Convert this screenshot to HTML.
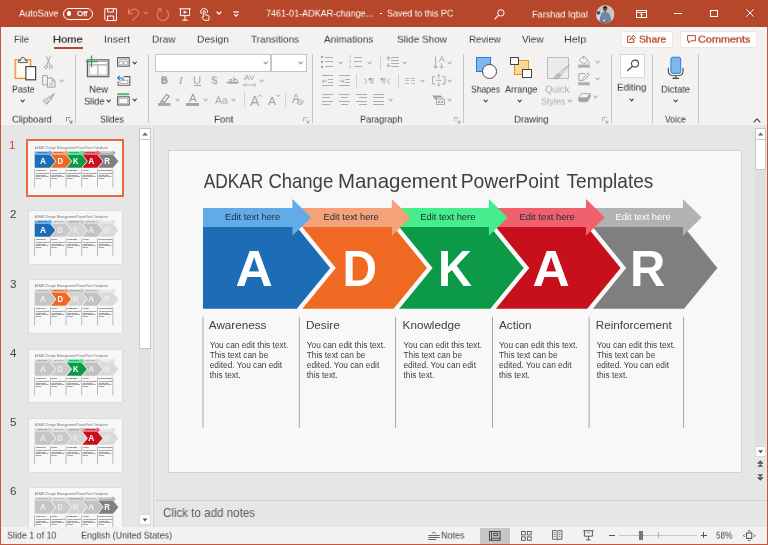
<!DOCTYPE html>
<html lang="en"><head><meta charset="utf-8"><title>PowerPoint</title>
<style>
html,body{margin:0;padding:0;}
body{width:768px;height:545px;overflow:hidden;position:relative;background:#E6E6E6;font-family:"Liberation Sans",sans-serif;}
.r{position:absolute;display:block;}
.t{position:absolute;white-space:nowrap;transform-origin:0 50%;will-change:transform;}
svg{overflow:visible;will-change:transform;}
svg text{font-family:"Liberation Sans",sans-serif;}
</style></head><body>
<div class="r" style="left:0px;top:0px;width:768px;height:545px;background:#E6E6E6;"></div>
<div class="r" style="left:0px;top:0px;width:768px;height:26.6px;background:#B7472A;"></div>
<div class="r" style="left:0px;top:26.6px;width:768px;height:98.4px;background:#F3F2F1;"></div>
<div class="r" style="left:168px;top:150px;width:574px;height:323px;background:#F8F8F8;box-shadow:0 0 0 1px #D2D2D2 inset;"></div>
<svg class="r" style="left:168px;top:150px;" width="574" height="323" viewBox="0 0 574 323"><text y="38.1" font-size="20.4" fill="#404040"><tspan x="35.7" textLength="59.7" lengthAdjust="spacingAndGlyphs">ADKAR</tspan> <tspan x="100.4" textLength="64.8" lengthAdjust="spacingAndGlyphs">Change</tspan> <tspan x="169.9" textLength="119.3" lengthAdjust="spacingAndGlyphs">Management</tspan> <tspan x="292.7" textLength="98.6" lengthAdjust="spacingAndGlyphs">PowerPoint</tspan> <tspan x="398.5" textLength="86.9" lengthAdjust="spacingAndGlyphs">Templates</tspan></text><polygon points="35.0,77.0 128.8,77.0 162.2,117.9 128.8,158.8 35.0,158.8" fill="#1C6DB6"/><polygon points="134.4,77.0 225.6,77.0 259.0,117.9 225.6,158.8 134.4,158.8 167.8,117.9" fill="#F06922"/><polygon points="231.2,77.0 322.3,77.0 355.7,117.9 322.3,158.8 231.2,158.8 264.6,117.9" fill="#0C9A48"/><polygon points="327.9,77.0 419.2,77.0 452.6,117.9 419.2,158.8 327.9,158.8 361.3,117.9" fill="#C8101D"/><polygon points="424.8,77.0 516.0,77.0 549.4,117.9 516.0,158.8 424.8,158.8 458.2,117.9" fill="#7F7F7F"/><polygon points="418.0,58.0 514.9,58.0 514.9,49.0 533.7,67.4 514.9,85.8 514.9,77.0 418.0,77.0" fill="#B2B2B2"/><polygon points="320.9,58.0 418.0,58.0 418.0,49.0 436.8,67.4 418.0,85.8 418.0,77.0 320.9,77.0" fill="#F0606D"/><polygon points="223.9,58.0 320.9,58.0 320.9,49.0 339.7,67.4 320.9,85.8 320.9,77.0 223.9,77.0" fill="#45EE8A"/><polygon points="124.4,58.0 223.9,58.0 223.9,49.0 242.7,67.4 223.9,85.8 223.9,77.0 124.4,77.0" fill="#F5A17A"/><polygon points="35.0,58.0 124.4,58.0 124.4,49.0 143.2,67.4 124.4,85.8 124.4,77.0 35.0,77.0" fill="#62ABE9"/><text transform="translate(67.41,135.5) scale(1.031,1)" font-size="50" font-weight="bold" fill="#fff">A</text><text transform="translate(174.50,135.5) scale(0.956,1)" font-size="50" font-weight="bold" fill="#fff">D</text><text transform="translate(270.05,135.5) scale(0.940,1)" font-size="50" font-weight="bold" fill="#fff">K</text><text transform="translate(364.41,135.5) scale(1.031,1)" font-size="50" font-weight="bold" fill="#fff">A</text><text transform="translate(462.12,135.5) scale(0.978,1)" font-size="50" font-weight="bold" fill="#fff">R</text><text x="84.6" y="69.9" font-size="9.4" fill="#203040" text-anchor="middle">Edit text here</text><text x="183.2" y="69.9" font-size="9.4" fill="#203040" text-anchor="middle">Edit text here</text><text x="279.8" y="69.9" font-size="9.4" fill="#203040" text-anchor="middle">Edit text here</text><text x="379.2" y="69.9" font-size="9.4" fill="#203040" text-anchor="middle">Edit text here</text><text x="475.0" y="69.9" font-size="9.4" fill="#fff" text-anchor="middle">Edit text here</text><rect x="34.5" y="166.7" width="1" height="111.3" fill="#A8A8A8"/><rect x="130.8" y="166.7" width="1" height="111.3" fill="#A8A8A8"/><rect x="227.1" y="166.7" width="1" height="111.3" fill="#A8A8A8"/><rect x="324.0" y="166.7" width="1" height="111.3" fill="#A8A8A8"/><rect x="420.6" y="166.7" width="1" height="111.3" fill="#A8A8A8"/><rect x="515.1" y="166.7" width="1" height="111.3" fill="#A8A8A8"/><text x="40.8" y="178.6" font-size="11.7" fill="#404040">Awareness</text><text x="41.7" y="198.1" font-size="8.3" fill="#404040">You can edit this text.</text><text x="41.7" y="208.1" font-size="8.3" fill="#404040">This text can be</text><text x="41.7" y="218.2" font-size="8.3" fill="#404040">edited. You can edit</text><text x="41.7" y="228.2" font-size="8.3" fill="#404040">this text.</text><text x="137.9" y="178.6" font-size="11.7" fill="#404040">Desire</text><text x="138.8" y="198.1" font-size="8.3" fill="#404040">You can edit this text.</text><text x="138.8" y="208.1" font-size="8.3" fill="#404040">This text can be</text><text x="138.8" y="218.2" font-size="8.3" fill="#404040">edited. You can edit</text><text x="138.8" y="228.2" font-size="8.3" fill="#404040">this text.</text><text x="234.6" y="178.6" font-size="11.7" fill="#404040">Knowledge</text><text x="235.5" y="198.1" font-size="8.3" fill="#404040">You can edit this text.</text><text x="235.5" y="208.1" font-size="8.3" fill="#404040">This text can be</text><text x="235.5" y="218.2" font-size="8.3" fill="#404040">edited. You can edit</text><text x="235.5" y="228.2" font-size="8.3" fill="#404040">this text.</text><text x="331.0" y="178.6" font-size="11.7" fill="#404040">Action</text><text x="331.0" y="198.1" font-size="8.3" fill="#404040">You can edit this text.</text><text x="331.0" y="208.1" font-size="8.3" fill="#404040">This text can be</text><text x="331.0" y="218.2" font-size="8.3" fill="#404040">edited. You can edit</text><text x="331.0" y="228.2" font-size="8.3" fill="#404040">this text.</text><text x="427.8" y="178.6" font-size="11.7" fill="#404040">Reinforcement</text><text x="428.7" y="198.1" font-size="8.3" fill="#404040">You can edit this text.</text><text x="428.7" y="208.1" font-size="8.3" fill="#404040">This text can be</text><text x="428.7" y="218.2" font-size="8.3" fill="#404040">edited. You can edit</text><text x="428.7" y="228.2" font-size="8.3" fill="#404040">this text.</text></svg>
<div class="r" style="left:25.7px;top:138.9px;width:98.4px;height:58.0px;background:#F8F8F8;box-sizing:border-box;border:2px solid #EA6A3C;"></div>
<svg class="r" style="left:28.5px;top:141.8px;" width="93.4" height="52.56" viewBox="0 0 574 323"><text y="43.1" font-size="20.4" fill="#707070"><tspan x="35.7" textLength="59.7" lengthAdjust="spacingAndGlyphs">ADKAR</tspan> <tspan x="100.4" textLength="64.8" lengthAdjust="spacingAndGlyphs">Change</tspan> <tspan x="169.9" textLength="119.3" lengthAdjust="spacingAndGlyphs">Management</tspan> <tspan x="292.7" textLength="98.6" lengthAdjust="spacingAndGlyphs">PowerPoint</tspan> <tspan x="398.5" textLength="86.9" lengthAdjust="spacingAndGlyphs">Templates</tspan></text><polygon points="35.0,77.0 128.8,77.0 162.2,117.9 128.8,158.8 35.0,158.8" fill="#1C6DB6"/><polygon points="134.4,77.0 225.6,77.0 259.0,117.9 225.6,158.8 134.4,158.8 167.8,117.9" fill="#F06922"/><polygon points="231.2,77.0 322.3,77.0 355.7,117.9 322.3,158.8 231.2,158.8 264.6,117.9" fill="#0C9A48"/><polygon points="327.9,77.0 419.2,77.0 452.6,117.9 419.2,158.8 327.9,158.8 361.3,117.9" fill="#C8101D"/><polygon points="424.8,77.0 516.0,77.0 549.4,117.9 516.0,158.8 424.8,158.8 458.2,117.9" fill="#7F7F7F"/><polygon points="418.0,58.0 514.9,58.0 514.9,49.0 533.7,67.4 514.9,85.8 514.9,77.0 418.0,77.0" fill="#B2B2B2"/><polygon points="320.9,58.0 418.0,58.0 418.0,49.0 436.8,67.4 418.0,85.8 418.0,77.0 320.9,77.0" fill="#F0606D"/><polygon points="223.9,58.0 320.9,58.0 320.9,49.0 339.7,67.4 320.9,85.8 320.9,77.0 223.9,77.0" fill="#45EE8A"/><polygon points="124.4,58.0 223.9,58.0 223.9,49.0 242.7,67.4 223.9,85.8 223.9,77.0 124.4,77.0" fill="#F5A17A"/><polygon points="35.0,58.0 124.4,58.0 124.4,49.0 143.2,67.4 124.4,85.8 124.4,77.0 35.0,77.0" fill="#62ABE9"/><text transform="translate(67.41,135.5) scale(1.031,1)" font-size="50" font-weight="bold" fill="#fff">A</text><text transform="translate(174.50,135.5) scale(0.956,1)" font-size="50" font-weight="bold" fill="#fff">D</text><text transform="translate(270.05,135.5) scale(0.940,1)" font-size="50" font-weight="bold" fill="#fff">K</text><text transform="translate(364.41,135.5) scale(1.031,1)" font-size="50" font-weight="bold" fill="#fff">A</text><text transform="translate(462.12,135.5) scale(0.978,1)" font-size="50" font-weight="bold" fill="#fff">R</text><text x="84.6" y="69.9" font-size="9.4" fill="#203040" text-anchor="middle">Edit text here</text><text x="183.2" y="69.9" font-size="9.4" fill="#203040" text-anchor="middle">Edit text here</text><text x="279.8" y="69.9" font-size="9.4" fill="#203040" text-anchor="middle">Edit text here</text><text x="379.2" y="69.9" font-size="9.4" fill="#203040" text-anchor="middle">Edit text here</text><text x="475.0" y="69.9" font-size="9.4" fill="#fff" text-anchor="middle">Edit text here</text><rect x="32.8" y="166.7" width="4.5" height="111.3" fill="#A2A2A2"/><rect x="129.1" y="166.7" width="4.5" height="111.3" fill="#A2A2A2"/><rect x="225.4" y="166.7" width="4.5" height="111.3" fill="#A2A2A2"/><rect x="322.2" y="166.7" width="4.5" height="111.3" fill="#A2A2A2"/><rect x="418.9" y="166.7" width="4.5" height="111.3" fill="#A2A2A2"/><rect x="513.4" y="166.7" width="4.5" height="111.3" fill="#A2A2A2"/><text x="40.8" y="178.6" font-size="11.7" fill="#404040" font-weight="bold">Awareness</text><text x="41.7" y="198.1" font-size="8.3" fill="#404040" font-weight="bold">You can edit this text.</text><text x="41.7" y="208.1" font-size="8.3" fill="#404040" font-weight="bold">This text can be</text><text x="41.7" y="218.2" font-size="8.3" fill="#404040" font-weight="bold">edited. You can edit</text><text x="41.7" y="228.2" font-size="8.3" fill="#404040" font-weight="bold">this text.</text><text x="137.9" y="178.6" font-size="11.7" fill="#404040" font-weight="bold">Desire</text><text x="138.8" y="198.1" font-size="8.3" fill="#404040" font-weight="bold">You can edit this text.</text><text x="138.8" y="208.1" font-size="8.3" fill="#404040" font-weight="bold">This text can be</text><text x="138.8" y="218.2" font-size="8.3" fill="#404040" font-weight="bold">edited. You can edit</text><text x="138.8" y="228.2" font-size="8.3" fill="#404040" font-weight="bold">this text.</text><text x="234.6" y="178.6" font-size="11.7" fill="#404040" font-weight="bold">Knowledge</text><text x="235.5" y="198.1" font-size="8.3" fill="#404040" font-weight="bold">You can edit this text.</text><text x="235.5" y="208.1" font-size="8.3" fill="#404040" font-weight="bold">This text can be</text><text x="235.5" y="218.2" font-size="8.3" fill="#404040" font-weight="bold">edited. You can edit</text><text x="235.5" y="228.2" font-size="8.3" fill="#404040" font-weight="bold">this text.</text><text x="331.0" y="178.6" font-size="11.7" fill="#404040" font-weight="bold">Action</text><text x="331.0" y="198.1" font-size="8.3" fill="#404040" font-weight="bold">You can edit this text.</text><text x="331.0" y="208.1" font-size="8.3" fill="#404040" font-weight="bold">This text can be</text><text x="331.0" y="218.2" font-size="8.3" fill="#404040" font-weight="bold">edited. You can edit</text><text x="331.0" y="228.2" font-size="8.3" fill="#404040" font-weight="bold">this text.</text><text x="427.8" y="178.6" font-size="11.7" fill="#404040" font-weight="bold">Reinforcement</text><text x="428.7" y="198.1" font-size="8.3" fill="#404040" font-weight="bold">You can edit this text.</text><text x="428.7" y="208.1" font-size="8.3" fill="#404040" font-weight="bold">This text can be</text><text x="428.7" y="218.2" font-size="8.3" fill="#404040" font-weight="bold">edited. You can edit</text><text x="428.7" y="228.2" font-size="8.3" fill="#404040" font-weight="bold">this text.</text></svg>
<span class="t" style="left:9.27px;top:137.90px;font-size:11.6px;line-height:13.33px;color:#D24726;">1</span>
<div class="r" style="left:27.5px;top:210.10000000000002px;width:95.4px;height:54.55783972125435px;background:#F8F8F8;box-sizing:border-box;border:1px solid #DDDDDD;"></div>
<svg class="r" style="left:28.5px;top:211.10000000000002px;" width="93.4" height="52.56" viewBox="0 0 574 323"><text y="43.1" font-size="20.4" fill="#707070"><tspan x="35.7" textLength="59.7" lengthAdjust="spacingAndGlyphs">ADKAR</tspan> <tspan x="100.4" textLength="64.8" lengthAdjust="spacingAndGlyphs">Change</tspan> <tspan x="169.9" textLength="119.3" lengthAdjust="spacingAndGlyphs">Management</tspan> <tspan x="292.7" textLength="98.6" lengthAdjust="spacingAndGlyphs">PowerPoint</tspan> <tspan x="398.5" textLength="86.9" lengthAdjust="spacingAndGlyphs">Templates</tspan></text><polygon points="35.0,77.0 128.8,77.0 162.2,117.9 128.8,158.8 35.0,158.8" fill="#1C6DB6"/><polygon points="134.4,77.0 225.6,77.0 259.0,117.9 225.6,158.8 134.4,158.8 167.8,117.9" fill="#C9C9C9"/><polygon points="231.2,77.0 322.3,77.0 355.7,117.9 322.3,158.8 231.2,158.8 264.6,117.9" fill="#D3D3D3"/><polygon points="327.9,77.0 419.2,77.0 452.6,117.9 419.2,158.8 327.9,158.8 361.3,117.9" fill="#C1C1C1"/><polygon points="424.8,77.0 516.0,77.0 549.4,117.9 516.0,158.8 424.8,158.8 458.2,117.9" fill="#DADADA"/><polygon points="418.0,58.0 514.9,58.0 514.9,49.0 533.7,67.4 514.9,85.8 514.9,77.0 418.0,77.0" fill="#E3E3E3"/><polygon points="320.9,58.0 418.0,58.0 418.0,49.0 436.8,67.4 418.0,85.8 418.0,77.0 320.9,77.0" fill="#D9D9D9"/><polygon points="223.9,58.0 320.9,58.0 320.9,49.0 339.7,67.4 320.9,85.8 320.9,77.0 223.9,77.0" fill="#C9C9C9"/><polygon points="124.4,58.0 223.9,58.0 223.9,49.0 242.7,67.4 223.9,85.8 223.9,77.0 124.4,77.0" fill="#DDDDDD"/><polygon points="35.0,58.0 124.4,58.0 124.4,49.0 143.2,67.4 124.4,85.8 124.4,77.0 35.0,77.0" fill="#62ABE9"/><text transform="translate(67.41,135.5) scale(1.031,1)" font-size="50" font-weight="bold" fill="#fff">A</text><text transform="translate(174.50,135.5) scale(0.956,1)" font-size="50" font-weight="bold" fill="#EDEDED">D</text><text transform="translate(270.05,135.5) scale(0.940,1)" font-size="50" font-weight="bold" fill="#EDEDED">K</text><text transform="translate(364.41,135.5) scale(1.031,1)" font-size="50" font-weight="bold" fill="#EDEDED">A</text><text transform="translate(462.12,135.5) scale(0.978,1)" font-size="50" font-weight="bold" fill="#EDEDED">R</text><text x="84.6" y="69.9" font-size="9.4" fill="#203040" text-anchor="middle">Edit text here</text><text x="183.2" y="69.9" font-size="9.4" fill="#777" text-anchor="middle">Edit text here</text><text x="279.8" y="69.9" font-size="9.4" fill="#777" text-anchor="middle">Edit text here</text><text x="379.2" y="69.9" font-size="9.4" fill="#777" text-anchor="middle">Edit text here</text><text x="475.0" y="69.9" font-size="9.4" fill="#fff" text-anchor="middle">Edit text here</text><rect x="32.8" y="166.7" width="4.5" height="111.3" fill="#A2A2A2"/><rect x="129.1" y="166.7" width="4.5" height="111.3" fill="#A2A2A2"/><rect x="225.4" y="166.7" width="4.5" height="111.3" fill="#A2A2A2"/><rect x="322.2" y="166.7" width="4.5" height="111.3" fill="#A2A2A2"/><rect x="418.9" y="166.7" width="4.5" height="111.3" fill="#A2A2A2"/><rect x="513.4" y="166.7" width="4.5" height="111.3" fill="#A2A2A2"/><text x="40.8" y="178.6" font-size="11.7" fill="#404040" font-weight="bold">Awareness</text><text x="41.7" y="198.1" font-size="8.3" fill="#404040" font-weight="bold">You can edit this text.</text><text x="41.7" y="208.1" font-size="8.3" fill="#404040" font-weight="bold">This text can be</text><text x="41.7" y="218.2" font-size="8.3" fill="#404040" font-weight="bold">edited. You can edit</text><text x="41.7" y="228.2" font-size="8.3" fill="#404040" font-weight="bold">this text.</text><text x="137.9" y="178.6" font-size="11.7" fill="#404040" font-weight="bold">Desire</text><text x="138.8" y="198.1" font-size="8.3" fill="#404040" font-weight="bold">You can edit this text.</text><text x="138.8" y="208.1" font-size="8.3" fill="#404040" font-weight="bold">This text can be</text><text x="138.8" y="218.2" font-size="8.3" fill="#404040" font-weight="bold">edited. You can edit</text><text x="138.8" y="228.2" font-size="8.3" fill="#404040" font-weight="bold">this text.</text><text x="234.6" y="178.6" font-size="11.7" fill="#404040" font-weight="bold">Knowledge</text><text x="235.5" y="198.1" font-size="8.3" fill="#404040" font-weight="bold">You can edit this text.</text><text x="235.5" y="208.1" font-size="8.3" fill="#404040" font-weight="bold">This text can be</text><text x="235.5" y="218.2" font-size="8.3" fill="#404040" font-weight="bold">edited. You can edit</text><text x="235.5" y="228.2" font-size="8.3" fill="#404040" font-weight="bold">this text.</text><text x="331.0" y="178.6" font-size="11.7" fill="#404040" font-weight="bold">Action</text><text x="331.0" y="198.1" font-size="8.3" fill="#404040" font-weight="bold">You can edit this text.</text><text x="331.0" y="208.1" font-size="8.3" fill="#404040" font-weight="bold">This text can be</text><text x="331.0" y="218.2" font-size="8.3" fill="#404040" font-weight="bold">edited. You can edit</text><text x="331.0" y="228.2" font-size="8.3" fill="#404040" font-weight="bold">this text.</text><text x="427.8" y="178.6" font-size="11.7" fill="#404040" font-weight="bold">Reinforcement</text><text x="428.7" y="198.1" font-size="8.3" fill="#404040" font-weight="bold">You can edit this text.</text><text x="428.7" y="208.1" font-size="8.3" fill="#404040" font-weight="bold">This text can be</text><text x="428.7" y="218.2" font-size="8.3" fill="#404040" font-weight="bold">edited. You can edit</text><text x="428.7" y="228.2" font-size="8.3" fill="#404040" font-weight="bold">this text.</text></svg>
<span class="t" style="left:9.62px;top:207.20px;font-size:11.6px;line-height:13.33px;color:#444444;">2</span>
<div class="r" style="left:27.5px;top:279.4px;width:95.4px;height:54.55783972125435px;background:#F8F8F8;box-sizing:border-box;border:1px solid #DDDDDD;"></div>
<svg class="r" style="left:28.5px;top:280.4px;" width="93.4" height="52.56" viewBox="0 0 574 323"><text y="43.1" font-size="20.4" fill="#707070"><tspan x="35.7" textLength="59.7" lengthAdjust="spacingAndGlyphs">ADKAR</tspan> <tspan x="100.4" textLength="64.8" lengthAdjust="spacingAndGlyphs">Change</tspan> <tspan x="169.9" textLength="119.3" lengthAdjust="spacingAndGlyphs">Management</tspan> <tspan x="292.7" textLength="98.6" lengthAdjust="spacingAndGlyphs">PowerPoint</tspan> <tspan x="398.5" textLength="86.9" lengthAdjust="spacingAndGlyphs">Templates</tspan></text><polygon points="35.0,77.0 128.8,77.0 162.2,117.9 128.8,158.8 35.0,158.8" fill="#C5C5C5"/><polygon points="134.4,77.0 225.6,77.0 259.0,117.9 225.6,158.8 134.4,158.8 167.8,117.9" fill="#F06922"/><polygon points="231.2,77.0 322.3,77.0 355.7,117.9 322.3,158.8 231.2,158.8 264.6,117.9" fill="#D3D3D3"/><polygon points="327.9,77.0 419.2,77.0 452.6,117.9 419.2,158.8 327.9,158.8 361.3,117.9" fill="#C1C1C1"/><polygon points="424.8,77.0 516.0,77.0 549.4,117.9 516.0,158.8 424.8,158.8 458.2,117.9" fill="#DADADA"/><polygon points="418.0,58.0 514.9,58.0 514.9,49.0 533.7,67.4 514.9,85.8 514.9,77.0 418.0,77.0" fill="#E3E3E3"/><polygon points="320.9,58.0 418.0,58.0 418.0,49.0 436.8,67.4 418.0,85.8 418.0,77.0 320.9,77.0" fill="#D9D9D9"/><polygon points="223.9,58.0 320.9,58.0 320.9,49.0 339.7,67.4 320.9,85.8 320.9,77.0 223.9,77.0" fill="#C9C9C9"/><polygon points="124.4,58.0 223.9,58.0 223.9,49.0 242.7,67.4 223.9,85.8 223.9,77.0 124.4,77.0" fill="#F5A17A"/><polygon points="35.0,58.0 124.4,58.0 124.4,49.0 143.2,67.4 124.4,85.8 124.4,77.0 35.0,77.0" fill="#D2D2D2"/><text transform="translate(67.41,135.5) scale(1.031,1)" font-size="50" font-weight="bold" fill="#EDEDED">A</text><text transform="translate(174.50,135.5) scale(0.956,1)" font-size="50" font-weight="bold" fill="#fff">D</text><text transform="translate(270.05,135.5) scale(0.940,1)" font-size="50" font-weight="bold" fill="#EDEDED">K</text><text transform="translate(364.41,135.5) scale(1.031,1)" font-size="50" font-weight="bold" fill="#EDEDED">A</text><text transform="translate(462.12,135.5) scale(0.978,1)" font-size="50" font-weight="bold" fill="#EDEDED">R</text><text x="84.6" y="69.9" font-size="9.4" fill="#777" text-anchor="middle">Edit text here</text><text x="183.2" y="69.9" font-size="9.4" fill="#203040" text-anchor="middle">Edit text here</text><text x="279.8" y="69.9" font-size="9.4" fill="#777" text-anchor="middle">Edit text here</text><text x="379.2" y="69.9" font-size="9.4" fill="#777" text-anchor="middle">Edit text here</text><text x="475.0" y="69.9" font-size="9.4" fill="#fff" text-anchor="middle">Edit text here</text><rect x="32.8" y="166.7" width="4.5" height="111.3" fill="#A2A2A2"/><rect x="129.1" y="166.7" width="4.5" height="111.3" fill="#A2A2A2"/><rect x="225.4" y="166.7" width="4.5" height="111.3" fill="#A2A2A2"/><rect x="322.2" y="166.7" width="4.5" height="111.3" fill="#A2A2A2"/><rect x="418.9" y="166.7" width="4.5" height="111.3" fill="#A2A2A2"/><rect x="513.4" y="166.7" width="4.5" height="111.3" fill="#A2A2A2"/><text x="40.8" y="178.6" font-size="11.7" fill="#404040" font-weight="bold">Awareness</text><text x="41.7" y="198.1" font-size="8.3" fill="#404040" font-weight="bold">You can edit this text.</text><text x="41.7" y="208.1" font-size="8.3" fill="#404040" font-weight="bold">This text can be</text><text x="41.7" y="218.2" font-size="8.3" fill="#404040" font-weight="bold">edited. You can edit</text><text x="41.7" y="228.2" font-size="8.3" fill="#404040" font-weight="bold">this text.</text><text x="137.9" y="178.6" font-size="11.7" fill="#404040" font-weight="bold">Desire</text><text x="138.8" y="198.1" font-size="8.3" fill="#404040" font-weight="bold">You can edit this text.</text><text x="138.8" y="208.1" font-size="8.3" fill="#404040" font-weight="bold">This text can be</text><text x="138.8" y="218.2" font-size="8.3" fill="#404040" font-weight="bold">edited. You can edit</text><text x="138.8" y="228.2" font-size="8.3" fill="#404040" font-weight="bold">this text.</text><text x="234.6" y="178.6" font-size="11.7" fill="#404040" font-weight="bold">Knowledge</text><text x="235.5" y="198.1" font-size="8.3" fill="#404040" font-weight="bold">You can edit this text.</text><text x="235.5" y="208.1" font-size="8.3" fill="#404040" font-weight="bold">This text can be</text><text x="235.5" y="218.2" font-size="8.3" fill="#404040" font-weight="bold">edited. You can edit</text><text x="235.5" y="228.2" font-size="8.3" fill="#404040" font-weight="bold">this text.</text><text x="331.0" y="178.6" font-size="11.7" fill="#404040" font-weight="bold">Action</text><text x="331.0" y="198.1" font-size="8.3" fill="#404040" font-weight="bold">You can edit this text.</text><text x="331.0" y="208.1" font-size="8.3" fill="#404040" font-weight="bold">This text can be</text><text x="331.0" y="218.2" font-size="8.3" fill="#404040" font-weight="bold">edited. You can edit</text><text x="331.0" y="228.2" font-size="8.3" fill="#404040" font-weight="bold">this text.</text><text x="427.8" y="178.6" font-size="11.7" fill="#404040" font-weight="bold">Reinforcement</text><text x="428.7" y="198.1" font-size="8.3" fill="#404040" font-weight="bold">You can edit this text.</text><text x="428.7" y="208.1" font-size="8.3" fill="#404040" font-weight="bold">This text can be</text><text x="428.7" y="218.2" font-size="8.3" fill="#404040" font-weight="bold">edited. You can edit</text><text x="428.7" y="228.2" font-size="8.3" fill="#404040" font-weight="bold">this text.</text></svg>
<span class="t" style="left:9.74px;top:276.50px;font-size:11.6px;line-height:13.33px;color:#444444;">3</span>
<div class="r" style="left:27.5px;top:348.7px;width:95.4px;height:54.55783972125435px;background:#F8F8F8;box-sizing:border-box;border:1px solid #DDDDDD;"></div>
<svg class="r" style="left:28.5px;top:349.7px;" width="93.4" height="52.56" viewBox="0 0 574 323"><text y="43.1" font-size="20.4" fill="#707070"><tspan x="35.7" textLength="59.7" lengthAdjust="spacingAndGlyphs">ADKAR</tspan> <tspan x="100.4" textLength="64.8" lengthAdjust="spacingAndGlyphs">Change</tspan> <tspan x="169.9" textLength="119.3" lengthAdjust="spacingAndGlyphs">Management</tspan> <tspan x="292.7" textLength="98.6" lengthAdjust="spacingAndGlyphs">PowerPoint</tspan> <tspan x="398.5" textLength="86.9" lengthAdjust="spacingAndGlyphs">Templates</tspan></text><polygon points="35.0,77.0 128.8,77.0 162.2,117.9 128.8,158.8 35.0,158.8" fill="#C5C5C5"/><polygon points="134.4,77.0 225.6,77.0 259.0,117.9 225.6,158.8 134.4,158.8 167.8,117.9" fill="#C9C9C9"/><polygon points="231.2,77.0 322.3,77.0 355.7,117.9 322.3,158.8 231.2,158.8 264.6,117.9" fill="#0C9A48"/><polygon points="327.9,77.0 419.2,77.0 452.6,117.9 419.2,158.8 327.9,158.8 361.3,117.9" fill="#C1C1C1"/><polygon points="424.8,77.0 516.0,77.0 549.4,117.9 516.0,158.8 424.8,158.8 458.2,117.9" fill="#DADADA"/><polygon points="418.0,58.0 514.9,58.0 514.9,49.0 533.7,67.4 514.9,85.8 514.9,77.0 418.0,77.0" fill="#E3E3E3"/><polygon points="320.9,58.0 418.0,58.0 418.0,49.0 436.8,67.4 418.0,85.8 418.0,77.0 320.9,77.0" fill="#D9D9D9"/><polygon points="223.9,58.0 320.9,58.0 320.9,49.0 339.7,67.4 320.9,85.8 320.9,77.0 223.9,77.0" fill="#45EE8A"/><polygon points="124.4,58.0 223.9,58.0 223.9,49.0 242.7,67.4 223.9,85.8 223.9,77.0 124.4,77.0" fill="#DDDDDD"/><polygon points="35.0,58.0 124.4,58.0 124.4,49.0 143.2,67.4 124.4,85.8 124.4,77.0 35.0,77.0" fill="#D2D2D2"/><text transform="translate(67.41,135.5) scale(1.031,1)" font-size="50" font-weight="bold" fill="#EDEDED">A</text><text transform="translate(174.50,135.5) scale(0.956,1)" font-size="50" font-weight="bold" fill="#EDEDED">D</text><text transform="translate(270.05,135.5) scale(0.940,1)" font-size="50" font-weight="bold" fill="#fff">K</text><text transform="translate(364.41,135.5) scale(1.031,1)" font-size="50" font-weight="bold" fill="#EDEDED">A</text><text transform="translate(462.12,135.5) scale(0.978,1)" font-size="50" font-weight="bold" fill="#EDEDED">R</text><text x="84.6" y="69.9" font-size="9.4" fill="#777" text-anchor="middle">Edit text here</text><text x="183.2" y="69.9" font-size="9.4" fill="#777" text-anchor="middle">Edit text here</text><text x="279.8" y="69.9" font-size="9.4" fill="#203040" text-anchor="middle">Edit text here</text><text x="379.2" y="69.9" font-size="9.4" fill="#777" text-anchor="middle">Edit text here</text><text x="475.0" y="69.9" font-size="9.4" fill="#fff" text-anchor="middle">Edit text here</text><rect x="32.8" y="166.7" width="4.5" height="111.3" fill="#A2A2A2"/><rect x="129.1" y="166.7" width="4.5" height="111.3" fill="#A2A2A2"/><rect x="225.4" y="166.7" width="4.5" height="111.3" fill="#A2A2A2"/><rect x="322.2" y="166.7" width="4.5" height="111.3" fill="#A2A2A2"/><rect x="418.9" y="166.7" width="4.5" height="111.3" fill="#A2A2A2"/><rect x="513.4" y="166.7" width="4.5" height="111.3" fill="#A2A2A2"/><text x="40.8" y="178.6" font-size="11.7" fill="#404040" font-weight="bold">Awareness</text><text x="41.7" y="198.1" font-size="8.3" fill="#404040" font-weight="bold">You can edit this text.</text><text x="41.7" y="208.1" font-size="8.3" fill="#404040" font-weight="bold">This text can be</text><text x="41.7" y="218.2" font-size="8.3" fill="#404040" font-weight="bold">edited. You can edit</text><text x="41.7" y="228.2" font-size="8.3" fill="#404040" font-weight="bold">this text.</text><text x="137.9" y="178.6" font-size="11.7" fill="#404040" font-weight="bold">Desire</text><text x="138.8" y="198.1" font-size="8.3" fill="#404040" font-weight="bold">You can edit this text.</text><text x="138.8" y="208.1" font-size="8.3" fill="#404040" font-weight="bold">This text can be</text><text x="138.8" y="218.2" font-size="8.3" fill="#404040" font-weight="bold">edited. You can edit</text><text x="138.8" y="228.2" font-size="8.3" fill="#404040" font-weight="bold">this text.</text><text x="234.6" y="178.6" font-size="11.7" fill="#404040" font-weight="bold">Knowledge</text><text x="235.5" y="198.1" font-size="8.3" fill="#404040" font-weight="bold">You can edit this text.</text><text x="235.5" y="208.1" font-size="8.3" fill="#404040" font-weight="bold">This text can be</text><text x="235.5" y="218.2" font-size="8.3" fill="#404040" font-weight="bold">edited. You can edit</text><text x="235.5" y="228.2" font-size="8.3" fill="#404040" font-weight="bold">this text.</text><text x="331.0" y="178.6" font-size="11.7" fill="#404040" font-weight="bold">Action</text><text x="331.0" y="198.1" font-size="8.3" fill="#404040" font-weight="bold">You can edit this text.</text><text x="331.0" y="208.1" font-size="8.3" fill="#404040" font-weight="bold">This text can be</text><text x="331.0" y="218.2" font-size="8.3" fill="#404040" font-weight="bold">edited. You can edit</text><text x="331.0" y="228.2" font-size="8.3" fill="#404040" font-weight="bold">this text.</text><text x="427.8" y="178.6" font-size="11.7" fill="#404040" font-weight="bold">Reinforcement</text><text x="428.7" y="198.1" font-size="8.3" fill="#404040" font-weight="bold">You can edit this text.</text><text x="428.7" y="208.1" font-size="8.3" fill="#404040" font-weight="bold">This text can be</text><text x="428.7" y="218.2" font-size="8.3" fill="#404040" font-weight="bold">edited. You can edit</text><text x="428.7" y="228.2" font-size="8.3" fill="#404040" font-weight="bold">this text.</text></svg>
<span class="t" style="left:9.97px;top:345.80px;font-size:11.6px;line-height:13.33px;color:#444444;">4</span>
<div class="r" style="left:27.5px;top:418.0px;width:95.4px;height:54.55783972125435px;background:#F8F8F8;box-sizing:border-box;border:1px solid #DDDDDD;"></div>
<svg class="r" style="left:28.5px;top:419.0px;" width="93.4" height="52.56" viewBox="0 0 574 323"><text y="43.1" font-size="20.4" fill="#707070"><tspan x="35.7" textLength="59.7" lengthAdjust="spacingAndGlyphs">ADKAR</tspan> <tspan x="100.4" textLength="64.8" lengthAdjust="spacingAndGlyphs">Change</tspan> <tspan x="169.9" textLength="119.3" lengthAdjust="spacingAndGlyphs">Management</tspan> <tspan x="292.7" textLength="98.6" lengthAdjust="spacingAndGlyphs">PowerPoint</tspan> <tspan x="398.5" textLength="86.9" lengthAdjust="spacingAndGlyphs">Templates</tspan></text><polygon points="35.0,77.0 128.8,77.0 162.2,117.9 128.8,158.8 35.0,158.8" fill="#C5C5C5"/><polygon points="134.4,77.0 225.6,77.0 259.0,117.9 225.6,158.8 134.4,158.8 167.8,117.9" fill="#C9C9C9"/><polygon points="231.2,77.0 322.3,77.0 355.7,117.9 322.3,158.8 231.2,158.8 264.6,117.9" fill="#D3D3D3"/><polygon points="327.9,77.0 419.2,77.0 452.6,117.9 419.2,158.8 327.9,158.8 361.3,117.9" fill="#C8101D"/><polygon points="424.8,77.0 516.0,77.0 549.4,117.9 516.0,158.8 424.8,158.8 458.2,117.9" fill="#DADADA"/><polygon points="418.0,58.0 514.9,58.0 514.9,49.0 533.7,67.4 514.9,85.8 514.9,77.0 418.0,77.0" fill="#E3E3E3"/><polygon points="320.9,58.0 418.0,58.0 418.0,49.0 436.8,67.4 418.0,85.8 418.0,77.0 320.9,77.0" fill="#F0606D"/><polygon points="223.9,58.0 320.9,58.0 320.9,49.0 339.7,67.4 320.9,85.8 320.9,77.0 223.9,77.0" fill="#C9C9C9"/><polygon points="124.4,58.0 223.9,58.0 223.9,49.0 242.7,67.4 223.9,85.8 223.9,77.0 124.4,77.0" fill="#DDDDDD"/><polygon points="35.0,58.0 124.4,58.0 124.4,49.0 143.2,67.4 124.4,85.8 124.4,77.0 35.0,77.0" fill="#D2D2D2"/><text transform="translate(67.41,135.5) scale(1.031,1)" font-size="50" font-weight="bold" fill="#EDEDED">A</text><text transform="translate(174.50,135.5) scale(0.956,1)" font-size="50" font-weight="bold" fill="#EDEDED">D</text><text transform="translate(270.05,135.5) scale(0.940,1)" font-size="50" font-weight="bold" fill="#EDEDED">K</text><text transform="translate(364.41,135.5) scale(1.031,1)" font-size="50" font-weight="bold" fill="#fff">A</text><text transform="translate(462.12,135.5) scale(0.978,1)" font-size="50" font-weight="bold" fill="#EDEDED">R</text><text x="84.6" y="69.9" font-size="9.4" fill="#777" text-anchor="middle">Edit text here</text><text x="183.2" y="69.9" font-size="9.4" fill="#777" text-anchor="middle">Edit text here</text><text x="279.8" y="69.9" font-size="9.4" fill="#777" text-anchor="middle">Edit text here</text><text x="379.2" y="69.9" font-size="9.4" fill="#203040" text-anchor="middle">Edit text here</text><text x="475.0" y="69.9" font-size="9.4" fill="#fff" text-anchor="middle">Edit text here</text><rect x="32.8" y="166.7" width="4.5" height="111.3" fill="#A2A2A2"/><rect x="129.1" y="166.7" width="4.5" height="111.3" fill="#A2A2A2"/><rect x="225.4" y="166.7" width="4.5" height="111.3" fill="#A2A2A2"/><rect x="322.2" y="166.7" width="4.5" height="111.3" fill="#A2A2A2"/><rect x="418.9" y="166.7" width="4.5" height="111.3" fill="#A2A2A2"/><rect x="513.4" y="166.7" width="4.5" height="111.3" fill="#A2A2A2"/><text x="40.8" y="178.6" font-size="11.7" fill="#404040" font-weight="bold">Awareness</text><text x="41.7" y="198.1" font-size="8.3" fill="#404040" font-weight="bold">You can edit this text.</text><text x="41.7" y="208.1" font-size="8.3" fill="#404040" font-weight="bold">This text can be</text><text x="41.7" y="218.2" font-size="8.3" fill="#404040" font-weight="bold">edited. You can edit</text><text x="41.7" y="228.2" font-size="8.3" fill="#404040" font-weight="bold">this text.</text><text x="137.9" y="178.6" font-size="11.7" fill="#404040" font-weight="bold">Desire</text><text x="138.8" y="198.1" font-size="8.3" fill="#404040" font-weight="bold">You can edit this text.</text><text x="138.8" y="208.1" font-size="8.3" fill="#404040" font-weight="bold">This text can be</text><text x="138.8" y="218.2" font-size="8.3" fill="#404040" font-weight="bold">edited. You can edit</text><text x="138.8" y="228.2" font-size="8.3" fill="#404040" font-weight="bold">this text.</text><text x="234.6" y="178.6" font-size="11.7" fill="#404040" font-weight="bold">Knowledge</text><text x="235.5" y="198.1" font-size="8.3" fill="#404040" font-weight="bold">You can edit this text.</text><text x="235.5" y="208.1" font-size="8.3" fill="#404040" font-weight="bold">This text can be</text><text x="235.5" y="218.2" font-size="8.3" fill="#404040" font-weight="bold">edited. You can edit</text><text x="235.5" y="228.2" font-size="8.3" fill="#404040" font-weight="bold">this text.</text><text x="331.0" y="178.6" font-size="11.7" fill="#404040" font-weight="bold">Action</text><text x="331.0" y="198.1" font-size="8.3" fill="#404040" font-weight="bold">You can edit this text.</text><text x="331.0" y="208.1" font-size="8.3" fill="#404040" font-weight="bold">This text can be</text><text x="331.0" y="218.2" font-size="8.3" fill="#404040" font-weight="bold">edited. You can edit</text><text x="331.0" y="228.2" font-size="8.3" fill="#404040" font-weight="bold">this text.</text><text x="427.8" y="178.6" font-size="11.7" fill="#404040" font-weight="bold">Reinforcement</text><text x="428.7" y="198.1" font-size="8.3" fill="#404040" font-weight="bold">You can edit this text.</text><text x="428.7" y="208.1" font-size="8.3" fill="#404040" font-weight="bold">This text can be</text><text x="428.7" y="218.2" font-size="8.3" fill="#404040" font-weight="bold">edited. You can edit</text><text x="428.7" y="228.2" font-size="8.3" fill="#404040" font-weight="bold">this text.</text></svg>
<span class="t" style="left:9.74px;top:415.10px;font-size:11.6px;line-height:13.33px;color:#444444;">5</span>
<div class="r" style="left:27.5px;top:487.3px;width:95.4px;height:54.55783972125435px;background:#F8F8F8;box-sizing:border-box;border:1px solid #DDDDDD;"></div>
<svg class="r" style="left:28.5px;top:488.3px;" width="93.4" height="52.56" viewBox="0 0 574 323"><text y="43.1" font-size="20.4" fill="#707070"><tspan x="35.7" textLength="59.7" lengthAdjust="spacingAndGlyphs">ADKAR</tspan> <tspan x="100.4" textLength="64.8" lengthAdjust="spacingAndGlyphs">Change</tspan> <tspan x="169.9" textLength="119.3" lengthAdjust="spacingAndGlyphs">Management</tspan> <tspan x="292.7" textLength="98.6" lengthAdjust="spacingAndGlyphs">PowerPoint</tspan> <tspan x="398.5" textLength="86.9" lengthAdjust="spacingAndGlyphs">Templates</tspan></text><polygon points="35.0,77.0 128.8,77.0 162.2,117.9 128.8,158.8 35.0,158.8" fill="#C5C5C5"/><polygon points="134.4,77.0 225.6,77.0 259.0,117.9 225.6,158.8 134.4,158.8 167.8,117.9" fill="#C9C9C9"/><polygon points="231.2,77.0 322.3,77.0 355.7,117.9 322.3,158.8 231.2,158.8 264.6,117.9" fill="#D3D3D3"/><polygon points="327.9,77.0 419.2,77.0 452.6,117.9 419.2,158.8 327.9,158.8 361.3,117.9" fill="#C1C1C1"/><polygon points="424.8,77.0 516.0,77.0 549.4,117.9 516.0,158.8 424.8,158.8 458.2,117.9" fill="#7F7F7F"/><polygon points="418.0,58.0 514.9,58.0 514.9,49.0 533.7,67.4 514.9,85.8 514.9,77.0 418.0,77.0" fill="#B2B2B2"/><polygon points="320.9,58.0 418.0,58.0 418.0,49.0 436.8,67.4 418.0,85.8 418.0,77.0 320.9,77.0" fill="#D9D9D9"/><polygon points="223.9,58.0 320.9,58.0 320.9,49.0 339.7,67.4 320.9,85.8 320.9,77.0 223.9,77.0" fill="#C9C9C9"/><polygon points="124.4,58.0 223.9,58.0 223.9,49.0 242.7,67.4 223.9,85.8 223.9,77.0 124.4,77.0" fill="#DDDDDD"/><polygon points="35.0,58.0 124.4,58.0 124.4,49.0 143.2,67.4 124.4,85.8 124.4,77.0 35.0,77.0" fill="#D2D2D2"/><text transform="translate(67.41,135.5) scale(1.031,1)" font-size="50" font-weight="bold" fill="#EDEDED">A</text><text transform="translate(174.50,135.5) scale(0.956,1)" font-size="50" font-weight="bold" fill="#EDEDED">D</text><text transform="translate(270.05,135.5) scale(0.940,1)" font-size="50" font-weight="bold" fill="#EDEDED">K</text><text transform="translate(364.41,135.5) scale(1.031,1)" font-size="50" font-weight="bold" fill="#EDEDED">A</text><text transform="translate(462.12,135.5) scale(0.978,1)" font-size="50" font-weight="bold" fill="#fff">R</text><text x="84.6" y="69.9" font-size="9.4" fill="#777" text-anchor="middle">Edit text here</text><text x="183.2" y="69.9" font-size="9.4" fill="#777" text-anchor="middle">Edit text here</text><text x="279.8" y="69.9" font-size="9.4" fill="#777" text-anchor="middle">Edit text here</text><text x="379.2" y="69.9" font-size="9.4" fill="#777" text-anchor="middle">Edit text here</text><text x="475.0" y="69.9" font-size="9.4" fill="#fff" text-anchor="middle">Edit text here</text><rect x="32.8" y="166.7" width="4.5" height="111.3" fill="#A2A2A2"/><rect x="129.1" y="166.7" width="4.5" height="111.3" fill="#A2A2A2"/><rect x="225.4" y="166.7" width="4.5" height="111.3" fill="#A2A2A2"/><rect x="322.2" y="166.7" width="4.5" height="111.3" fill="#A2A2A2"/><rect x="418.9" y="166.7" width="4.5" height="111.3" fill="#A2A2A2"/><rect x="513.4" y="166.7" width="4.5" height="111.3" fill="#A2A2A2"/><text x="40.8" y="178.6" font-size="11.7" fill="#404040" font-weight="bold">Awareness</text><text x="41.7" y="198.1" font-size="8.3" fill="#404040" font-weight="bold">You can edit this text.</text><text x="41.7" y="208.1" font-size="8.3" fill="#404040" font-weight="bold">This text can be</text><text x="41.7" y="218.2" font-size="8.3" fill="#404040" font-weight="bold">edited. You can edit</text><text x="41.7" y="228.2" font-size="8.3" fill="#404040" font-weight="bold">this text.</text><text x="137.9" y="178.6" font-size="11.7" fill="#404040" font-weight="bold">Desire</text><text x="138.8" y="198.1" font-size="8.3" fill="#404040" font-weight="bold">You can edit this text.</text><text x="138.8" y="208.1" font-size="8.3" fill="#404040" font-weight="bold">This text can be</text><text x="138.8" y="218.2" font-size="8.3" fill="#404040" font-weight="bold">edited. You can edit</text><text x="138.8" y="228.2" font-size="8.3" fill="#404040" font-weight="bold">this text.</text><text x="234.6" y="178.6" font-size="11.7" fill="#404040" font-weight="bold">Knowledge</text><text x="235.5" y="198.1" font-size="8.3" fill="#404040" font-weight="bold">You can edit this text.</text><text x="235.5" y="208.1" font-size="8.3" fill="#404040" font-weight="bold">This text can be</text><text x="235.5" y="218.2" font-size="8.3" fill="#404040" font-weight="bold">edited. You can edit</text><text x="235.5" y="228.2" font-size="8.3" fill="#404040" font-weight="bold">this text.</text><text x="331.0" y="178.6" font-size="11.7" fill="#404040" font-weight="bold">Action</text><text x="331.0" y="198.1" font-size="8.3" fill="#404040" font-weight="bold">You can edit this text.</text><text x="331.0" y="208.1" font-size="8.3" fill="#404040" font-weight="bold">This text can be</text><text x="331.0" y="218.2" font-size="8.3" fill="#404040" font-weight="bold">edited. You can edit</text><text x="331.0" y="228.2" font-size="8.3" fill="#404040" font-weight="bold">this text.</text><text x="427.8" y="178.6" font-size="11.7" fill="#404040" font-weight="bold">Reinforcement</text><text x="428.7" y="198.1" font-size="8.3" fill="#404040" font-weight="bold">You can edit this text.</text><text x="428.7" y="208.1" font-size="8.3" fill="#404040" font-weight="bold">This text can be</text><text x="428.7" y="218.2" font-size="8.3" fill="#404040" font-weight="bold">edited. You can edit</text><text x="428.7" y="228.2" font-size="8.3" fill="#404040" font-weight="bold">this text.</text></svg>
<span class="t" style="left:9.62px;top:484.40px;font-size:11.6px;line-height:13.33px;color:#444444;">6</span>
<div class="r" style="left:139px;top:128px;width:12px;height:399px;background:#E1E1E1;"></div>
<div class="r" style="left:139px;top:128px;width:12px;height:12px;background:#FFFFFF;box-sizing:border-box;border:1px solid #C6C6C6;"></div>
<div class="r" style="left:139px;top:140px;width:12px;height:209px;background:#FFFFFF;box-sizing:border-box;border:1px solid #C6C6C6;border-top:none;"></div>
<div class="r" style="left:139px;top:514px;width:12px;height:11px;background:#FFFFFF;box-sizing:border-box;border:1px solid #DADADA;"></div>
<svg class="r" style="left:139px;top:128px;" width="12" height="12" viewBox="0 0 12 12"><path d="M3 7.5 L6 4.5 L9 7.5 Z" fill="#666"/></svg>
<svg class="r" style="left:139px;top:514px;" width="12" height="11" viewBox="0 0 12 11"><path d="M3.5 4.5 L8.5 4.5 L6 7.5 Z" fill="#555"/></svg>
<div class="r" style="left:151px;top:125px;width:2.5px;height:402px;background:#EDEDED;"></div>
<div class="r" style="left:153px;top:125px;width:1.3px;height:402px;background:#D6D6D6;"></div>
<div class="r" style="left:156px;top:500px;width:611px;height:1px;background:#D0D0D0;"></div>
<span class="t" style="left:163.02px;top:507.03px;font-size:11.9px;line-height:13.67px;color:#5C5C5C;transform:scale(0.9729,1.0);">Click to add notes</span>
<div class="r" style="left:0px;top:527px;width:768px;height:18px;background:#F3F2F1;"></div>
<span class="t" style="left:18.80px;top:8.11px;font-size:10.0px;line-height:11.49px;color:#FFFFFF;transform:scale(0.9091,0.86);">AutoSave</span>
<div class="r" style="left:63px;top:7.5px;width:30px;height:12.2px;background:transparent;box-sizing:border-box;border:1px solid #fff;border-radius:7px;"></div>
<div class="r" style="left:66.9px;top:11.0px;width:4.6px;height:4.6px;background:#fff;border-radius:50%;"></div>
<span class="t" style="left:77.31px;top:9.36px;font-size:8px;line-height:9.19px;color:#FFFFFF;transform:scale(0.9744,1.0);-webkit-text-stroke:0.25px currentColor;">Off</span>
<svg class="r" style="left:104px;top:8px;" width="13" height="13" viewBox="0 0 13 13"><path d="M0.8 0.7 H12.4 V12.6 H2 L0.8 11.4 Z M3.6 0.7 V4 H9.4 V0.7 M3.6 12.6 V8 H9.6 V12.6" fill="none" stroke="#fff" stroke-width="1"/></svg>
<svg class="r" style="left:127px;top:8px;" width="13" height="13.4" viewBox="0 0 13 13.4"><path d="M1.5 0.6 V5.7 H6.4" fill="none" stroke="#DF846B" stroke-width="1.1"/><path d="M1.7 5.5 C3.5 2.6 6.5 0.5 9.1 1.4 C11.6 2.3 12.3 5 11 7.2 L5 12.9" fill="none" stroke="#DF846B" stroke-width="1.1"/></svg>
<svg class="r" style="left:142.6px;top:11.350000000000001px;" width="5.6" height="3.9" viewBox="0 0 5.6 3.9"><path d="M1 1 L2.80 2.90 L4.60 1" fill="none" stroke="#DF846B" stroke-width="1.1" stroke-linecap="round" stroke-linejoin="round"/></svg>
<svg class="r" style="left:156px;top:8px;" width="14" height="13.4" viewBox="0 0 14 13.4"><path d="M10.17 2.23 A5.7 5.7 0 1 1 3.63 2.23" fill="none" stroke="#DF846B" stroke-width="1.1"/><path d="M1.7 0.9 H5 V4.3" fill="none" stroke="#DF846B" stroke-width="1.1"/></svg>
<svg class="r" style="left:179.3px;top:7.8px;" width="12" height="13" viewBox="0 0 12 13"><path d="M0.3 0.8 H11.7 M1.4 0.8 V7.6 H10.6 V0.8 M6 7.6 V12.2 M3.2 12.2 H8.8" fill="none" stroke="#fff" stroke-width="1"/><path d="M4.6 2.4 L8 4.2 L4.6 6 Z" fill="#fff"/></svg>
<svg class="r" style="left:199.6px;top:8px;" width="10" height="13" viewBox="0 0 10 13"><path d="M7.3 4.96 A3.4 3.4 0 1 0 1.6 6.1" fill="none" stroke="#fff" stroke-width="0.95"/><path d="M3.3 9 V3.5 A0.9 0.9 0 0 1 5.1 3.5 V6.7 L8.2 7.5 C9 7.8 9.3 8.3 9.2 9 L8.7 12.3 H4.3 L2 9.6 C1.7 8.9 2.6 8.4 3.3 9.1" fill="none" stroke="#fff" stroke-width="0.95" stroke-linejoin="round"/></svg>
<svg class="r" style="left:215.6px;top:11.25px;" width="6.0" height="4.1" viewBox="0 0 6.0 4.1"><path d="M1 1 L3.00 3.10 L5.00 1" fill="none" stroke="#FFFFFF" stroke-width="1.2" stroke-linecap="round" stroke-linejoin="round"/></svg>
<svg class="r" style="left:233.4px;top:11px;" width="7" height="6.4" viewBox="0 0 7 6.4"><path d="M0.4 1 H5.9" stroke="#fff" stroke-width="1.2" fill="none"/><path d="M1.1 3.2 L3.15 5.2 L5.2 3.2" stroke="#fff" stroke-width="1.15" fill="none"/></svg>
<span class="t" style="left:266.35px;top:8.11px;font-size:10.0px;line-height:11.49px;color:#FFFFFF;transform:scale(0.9014,0.86);">7461-01-ADKAR-change...</span>
<div class="r" style="left:379.8px;top:13.3px;width:2.6px;height:1px;background:#fff;"></div>
<span class="t" style="left:387.26px;top:8.11px;font-size:10.0px;line-height:11.49px;color:#FFFFFF;transform:scale(0.8899,0.86);">Saved to this PC</span>
<svg class="r" style="left:494px;top:9px;" width="11" height="11" viewBox="0 0 11 11"><circle cx="6.9" cy="3.9" r="3.2" fill="none" stroke="#fff" stroke-width="1"/><path d="M4.6 6.2 L0.6 10.4" stroke="#fff" stroke-width="1.1" fill="none"/></svg>
<span class="t" style="left:532.07px;top:8.51px;font-size:10.0px;line-height:11.49px;color:#FFFFFF;transform:scale(0.9112,0.86);">Farshad Iqbal</span>
<svg class="r" style="left:595.7px;top:4.8px;" width="18.6" height="18.6" viewBox="0 0 18.6 18.6"><defs><clipPath id="av"><circle cx="9.3" cy="9.3" r="9.2"/></clipPath></defs>
<g clip-path="url(#av)"><rect width="18.6" height="18.6" fill="#C9C8C4"/>
<rect x="0" y="9" width="6" height="10" fill="#D6D8E0"/>
<rect x="0.4" y="6.2" width="3.8" height="3.2" rx="1" fill="#4A5164"/>
<path d="M3.6 18.6 C3.4 12.6 4.6 8.4 7.4 7.2 L9.3 8.2 L11.2 7.2 C14.2 8.4 15.4 12.6 15 18.6 Z" fill="#6E86A9"/>
<path d="M5 13 C6 15.4 7.4 16.4 9 16.8 L9.6 18.6 H4.4 Z" fill="#5C7396"/>
<ellipse cx="9.1" cy="4.3" rx="1.9" ry="2.5" fill="#8B6A58"/>
<path d="M7 4.2 C6.6 1.6 8 1 9.2 1 C10.6 1 11.6 1.8 11.2 4.2 C10.8 3.2 10 2.9 9.1 3 C8.2 3.1 7.4 3.4 7 4.2 Z" fill="#2A2422"/>
<rect x="7.5" y="3.6" width="3.2" height="0.9" fill="#2E2A2A"/>
<rect x="8.3" y="6.4" width="1.7" height="1.6" fill="#7A5C4C"/>
<ellipse cx="8.8" cy="15.6" rx="2.2" ry="1.1" fill="#D9C9BE"/>
<rect x="9.4" y="15.2" width="1.6" height="1.6" fill="#7A4A3A"/>
</g></svg>
<svg class="r" style="left:636.2px;top:9.6px;" width="11" height="8" viewBox="0 0 11 8"><rect x="0.5" y="0.5" width="10" height="7" fill="none" stroke="#fff" stroke-width="1"/><path d="M0.5 2.5 H10.5 M5.5 7 V3.8 M3.9 5.2 L5.5 3.7 L7.1 5.2" fill="none" stroke="#fff" stroke-width="0.9"/></svg>
<div class="r" style="left:673.8px;top:12.9px;width:8px;height:1px;background:#fff;"></div>
<div class="r" style="left:709.5px;top:9.6px;width:8px;height:7.6px;background:transparent;box-sizing:border-box;border:1px solid #fff;"></div>
<svg class="r" style="left:745.6px;top:9.4px;" width="8" height="8" viewBox="0 0 8 8"><path d="M0.4 0.4 L7.6 7.6 M7.6 0.4 L0.4 7.6" stroke="#fff" stroke-width="1" fill="none"/></svg>
<span class="t" style="left:13.76px;top:34.04px;font-size:10.2px;line-height:11.72px;color:#3C3C3C;transform:scale(0.9080,0.86);">File</span>
<span class="t" style="left:103.56px;top:34.04px;font-size:10.2px;line-height:11.72px;color:#3C3C3C;transform:scale(1.0212,0.86);">Insert</span>
<span class="t" style="left:151.70px;top:34.04px;font-size:10.2px;line-height:11.72px;color:#3C3C3C;transform:scale(0.9804,0.86);">Draw</span>
<span class="t" style="left:196.68px;top:34.04px;font-size:10.2px;line-height:11.72px;color:#3C3C3C;transform:scale(1.0068,0.86);">Design</span>
<span class="t" style="left:251.30px;top:34.04px;font-size:10.2px;line-height:11.72px;color:#3C3C3C;transform:scale(0.9722,0.86);">Transitions</span>
<span class="t" style="left:323.80px;top:34.04px;font-size:10.2px;line-height:11.72px;color:#3C3C3C;transform:scale(0.9764,0.86);">Animations</span>
<span class="t" style="left:397.00px;top:34.04px;font-size:10.2px;line-height:11.72px;color:#3C3C3C;transform:scale(0.9804,0.86);">Slide Show</span>
<span class="t" style="left:468.73px;top:34.04px;font-size:10.2px;line-height:11.72px;color:#3C3C3C;transform:scale(0.9498,0.86);">Review</span>
<span class="t" style="left:522.40px;top:34.04px;font-size:10.2px;line-height:11.72px;color:#3C3C3C;transform:scale(0.9850,0.86);">View</span>
<span class="t" style="left:564.13px;top:34.04px;font-size:10.2px;line-height:11.72px;color:#3C3C3C;transform:scale(1.0612,0.86);">Help</span>
<span class="t" style="left:53.31px;top:34.04px;font-size:10.2px;line-height:11.72px;color:#2B2B2B;transform:scale(1.0923,0.86);-webkit-text-stroke:0.25px currentColor;">Home</span>
<div class="r" style="left:53.8px;top:46.5px;width:29.2px;height:2px;background:#B7472A;"></div>
<div class="r" style="left:621px;top:30.5px;width:52px;height:17px;background:#FFFFFF;box-sizing:border-box;border:1px solid #E8E6E4;border-radius:2px;"></div>
<div class="r" style="left:680px;top:30.5px;width:77px;height:17px;background:#FFFFFF;box-sizing:border-box;border:1px solid #E8E6E4;border-radius:2px;"></div>
<span class="t" style="left:638.69px;top:34.04px;font-size:10.2px;line-height:11.72px;color:#B7472A;transform:scale(1.0033,0.86);-webkit-text-stroke:0.35px currentColor;">Share</span>
<span class="t" style="left:697.96px;top:34.04px;font-size:10.2px;line-height:11.72px;color:#B7472A;transform:scale(1.0611,0.86);-webkit-text-stroke:0.35px currentColor;">Comments</span>
<svg class="r" style="left:626.5px;top:34.2px;" width="9" height="9" viewBox="0 0 9 9"><path d="M3.6 2.2 H0.6 V8.4 H7 V6" fill="none" stroke="#B7472A" stroke-width="1"/><path d="M2.8 6.2 C3 4 4.4 3 6 3 V1 L8.6 3.6 L6 6.2 V4.4 C4.6 4.4 3.6 4.8 2.8 6.2 Z" fill="none" stroke="#B7472A" stroke-width="0.9" stroke-linejoin="round"/></svg>
<svg class="r" style="left:686.5px;top:35.0px;" width="9" height="9" viewBox="0 0 9 9"><path d="M0.6 0.6 H8.4 V5.8 H3.8 L1.8 8 V5.8 H0.6 Z" fill="none" stroke="#B7472A" stroke-width="1" stroke-linejoin="round"/></svg>
<div class="r" style="left:74.6px;top:54.3px;width:1px;height:68.7px;background:#C8C6C4;"></div>
<div class="r" style="left:148.2px;top:54.3px;width:1px;height:68.7px;background:#C8C6C4;"></div>
<div class="r" style="left:311.9px;top:54.3px;width:1px;height:68.7px;background:#C8C6C4;"></div>
<div class="r" style="left:462.9px;top:54.3px;width:1px;height:68.7px;background:#C8C6C4;"></div>
<div class="r" style="left:610.5px;top:54.3px;width:1px;height:68.7px;background:#C8C6C4;"></div>
<div class="r" style="left:652.1px;top:54.3px;width:1px;height:68.7px;background:#C8C6C4;"></div>
<div class="r" style="left:697.5px;top:54.3px;width:1px;height:68.7px;background:#C8C6C4;"></div>
<svg class="r" style="left:14px;top:56px;" width="23" height="25" viewBox="0 0 23 25"><rect x="1.2" y="3.8" width="15.4" height="18.6" fill="#FFFCF6" stroke="#E8912D" stroke-width="1.3"/><rect x="2.4" y="5" width="13" height="16.2" fill="none" stroke="#FBE2B2" stroke-width="1"/>
<path d="M4.6 6.6 V4.4 H6.6 C6.6 2.4 7.6 1.4 8.9 1.4 C10.2 1.4 11.2 2.4 11.2 4.4 H13.2 V6.6 Z" fill="#F3F2F1" stroke="#555" stroke-width="1"/>
<rect x="11.8" y="10.6" width="9.8" height="13.2" fill="#FFFFFF" stroke="#444" stroke-width="1.2"/></svg>
<span class="t" style="left:12.20px;top:83.51px;font-size:10.0px;line-height:11.49px;color:#333333;transform:scale(0.8807,0.86);">Paste</span>
<svg class="r" style="left:20.25px;top:98.85px;" width="5.3" height="3.9" viewBox="0 0 5.3 3.9"><path d="M1 1 L2.65 2.90 L4.30 1" fill="none" stroke="#333333" stroke-width="1.1" stroke-linecap="round" stroke-linejoin="round"/></svg>
<svg class="r" style="left:43.8px;top:56px;" width="9" height="13.4" viewBox="0 0 9 13.4"><path d="M2.5 0.3 L6.2 9.5 M6.3 0.3 L2.6 9.5" fill="none" stroke="#A3A3A3" stroke-width="1"/><circle cx="1.95" cy="10.9" r="1.55" fill="none" stroke="#A3A3A3" stroke-width="0.95"/><circle cx="6.85" cy="10.9" r="1.55" fill="none" stroke="#A3A3A3" stroke-width="0.95"/></svg>
<svg class="r" style="left:41.6px;top:74.8px;" width="14" height="13" viewBox="0 0 14 13"><path d="M5.2 9.8 H0.6 V0.6 H5.4 V3" fill="none" stroke="#A3A3A3" stroke-width="1"/><path d="M5.4 3 H10.2 L13 5.8 V12.2 H5.4 Z M10 3.2 V6 H12.8" fill="none" stroke="#A3A3A3" stroke-width="1"/><path d="M7.4 8 H11 M7.4 10 H11" stroke="#A3A3A3" stroke-width="0.8"/></svg>
<svg class="r" style="left:59.15px;top:78.85px;" width="5.3" height="3.9" viewBox="0 0 5.3 3.9"><path d="M1 1 L2.65 2.90 L4.30 1" fill="none" stroke="#ADADAD" stroke-width="1.1" stroke-linecap="round" stroke-linejoin="round"/></svg>
<svg class="r" style="left:42.4px;top:93px;" width="13" height="12.4" viewBox="0 0 13 12.4"><path d="M9.9 3.5 L11.7 1.1" fill="none" stroke="#A3A3A3" stroke-width="1.7" stroke-linecap="round"/><path d="M8.4 2.8 L10.6 5 L9 6.4 L7 4.2 Z" fill="#D2D2D2" stroke="#A3A3A3" stroke-width="0.8" stroke-linejoin="round"/><path d="M7 4.2 L9 6.4 L4.8 11.4 L0.8 7.6 Z" fill="#E4E4E4" stroke="#A3A3A3" stroke-width="0.9" stroke-linejoin="round"/><path d="M3 9.6 L6.2 6.4 M4.2 10.8 L7.4 7.4" fill="none" stroke="#A3A3A3" stroke-width="0.7"/></svg>
<span class="t" style="left:11.74px;top:113.81px;font-size:10.0px;line-height:11.49px;color:#333333;transform:scale(0.9279,0.86);">Clipboard</span>
<svg class="r" style="left:66.2px;top:116.5px;" width="7" height="7" viewBox="0 0 7 7"><path d="M0.5 4.6 V0.5 H4.6" fill="none" stroke="#8A8A8A" stroke-width="0.9"/><path d="M2.4 2.4 L5.6 5.6" fill="none" stroke="#8A8A8A" stroke-width="0.95"/><path d="M6.4 3 V6.4 H3 Z" fill="#8A8A8A"/></svg>
<svg class="r" style="left:85px;top:54.6px;" width="25" height="23" viewBox="0 0 25 23"><rect x="2.4" y="4.9" width="21.4" height="16.8" fill="#FCFCFC" stroke="#5E5E5E" stroke-width="1.2"/>
<rect x="4" y="6.5" width="18.2" height="13.6" fill="none" stroke="#A8A8A8" stroke-width="0.9"/>
<path d="M4 9.9 H22.2 M12.9 9.9 V20.1" stroke="#9A9A9A" stroke-width="1" fill="none"/>
<path d="M6.5 0.4 V12.3 M0.7 6.6 H12.6" stroke="#2EA655" stroke-width="1.3" fill="none"/></svg>
<span class="t" style="left:88.54px;top:83.51px;font-size:10.0px;line-height:11.49px;color:#333333;transform:scale(0.9531,0.86);">New</span>
<span class="t" style="left:83.84px;top:96.41px;font-size:10.0px;line-height:11.49px;color:#333333;transform:scale(0.9202,0.86);">Slide</span>
<svg class="r" style="left:105.89999999999999px;top:99.05px;" width="5.4" height="3.9" viewBox="0 0 5.4 3.9"><path d="M1 1 L2.70 2.90 L4.40 1" fill="none" stroke="#333333" stroke-width="1.1" stroke-linecap="round" stroke-linejoin="round"/></svg>
<svg class="r" style="left:117px;top:57px;" width="13" height="10" viewBox="0 0 13 10"><rect x="0.6" y="0.6" width="11.6" height="8.6" fill="#FCFCFC" stroke="#5E5E5E" stroke-width="1.1"/><path d="M2 2.1 H10.8" stroke="#9A9A9A" stroke-width="1" fill="none"/><path d="M2.1 4 H5.7 V7.8 H2.1 Z M7.1 4 H10.7 V7.8 H7.1 Z" fill="none" stroke="#9A9A9A" stroke-width="0.8"/></svg>
<svg class="r" style="left:132.4px;top:60.65px;" width="5.4" height="3.9" viewBox="0 0 5.4 3.9"><path d="M1 1 L2.70 2.90 L4.40 1" fill="none" stroke="#333333" stroke-width="1.1" stroke-linecap="round" stroke-linejoin="round"/></svg>
<svg class="r" style="left:116.6px;top:74.6px;" width="14" height="11" viewBox="0 0 14 11"><path d="M6.4 1.6 H12.8 V10.2 H1.2 V6.6" fill="#FCFCFC" stroke="#5E5E5E" stroke-width="1.1"/><path d="M3 5.2 H11 V8.4 H3 Z" fill="none" stroke="#A0A0A0" stroke-width="0.8"/><path d="M0.8 3 H4.2 C5.8 3 6.4 4.2 6.2 5.8 M2.8 0.8 L0.7 3 L2.8 5.2" fill="none" stroke="#2B7CD3" stroke-width="1.2"/></svg>
<svg class="r" style="left:117px;top:93.4px;" width="13" height="12.6" viewBox="0 0 13 12.6"><rect x="0.1" y="0.1" width="12.4" height="2.2" rx="1" fill="#62BD7C"/><rect x="0.6" y="3.8" width="11.6" height="8.2" fill="#FCFCFC" stroke="#5E5E5E" stroke-width="1.1"/><rect x="2.1" y="5.3" width="8.6" height="5.2" fill="none" stroke="#A8A8A8" stroke-width="0.8"/></svg>
<svg class="r" style="left:132.4px;top:98.25px;" width="5.4" height="3.9" viewBox="0 0 5.4 3.9"><path d="M1 1 L2.70 2.90 L4.40 1" fill="none" stroke="#333333" stroke-width="1.1" stroke-linecap="round" stroke-linejoin="round"/></svg>
<span class="t" style="left:99.56px;top:113.81px;font-size:10.0px;line-height:11.49px;color:#333333;transform:scale(0.8707,0.86);">Slides</span>
<div class="r" style="left:155px;top:54.3px;width:115.5px;height:17.8px;background:#FFFFFF;box-sizing:border-box;border:1px solid #C8C6C4;"></div>
<div class="r" style="left:270.5px;top:54.3px;width:36px;height:17.8px;background:#FFFFFF;box-sizing:border-box;border:1px solid #C8C6C4;"></div>
<svg class="r" style="left:262.6px;top:61.25px;" width="5.4" height="3.9" viewBox="0 0 5.4 3.9"><path d="M1 1 L2.70 2.90 L4.40 1" fill="none" stroke="#8A8A8A" stroke-width="1.1" stroke-linecap="round" stroke-linejoin="round"/></svg>
<svg class="r" style="left:298.3px;top:61.25px;" width="5.4" height="3.9" viewBox="0 0 5.4 3.9"><path d="M1 1 L2.70 2.90 L4.40 1" fill="none" stroke="#8A8A8A" stroke-width="1.1" stroke-linecap="round" stroke-linejoin="round"/></svg>
<span class="t" style="left:160.53px;top:74.11px;font-size:11px;line-height:12.64px;color:#959595;font-weight:bold;transform:scale(0.8644,0.9);-webkit-text-stroke:0.25px currentColor;">B</span>
<span class="t" style="left:179.20px;top:74.23px;font-size:10.8px;line-height:12.41px;color:#A3A3A3;font-family:'Liberation Serif',serif;font-style:italic;">I</span>
<span class="t" style="left:193.39px;top:73.91px;font-size:11px;line-height:12.64px;color:#A3A3A3;transform:scale(1.0367,0.9);">U</span>
<div class="r" style="left:194.1px;top:84.6px;width:7px;height:0.9px;background:#A3A3A3;"></div>
<span class="t" style="left:211.32px;top:74.11px;font-size:11px;line-height:12.64px;color:#A3A3A3;transform:scale(0.8772,0.9);text-shadow:0.9px 0.9px 0 #CDCDCD;-webkit-text-stroke:0.2px currentColor;">S</span>
<span class="t" style="left:227.65px;top:77.18px;font-size:8.6px;line-height:9.88px;color:#8E8E8E;transform:scale(1.0286,1.12);">ab</span>
<div class="r" style="left:226px;top:81.8px;width:12.6px;height:0.9px;background:#ABABAB;"></div>
<span class="t" style="left:244.30px;top:74.02px;font-size:7.6px;line-height:8.73px;color:#A3A3A3;transform:scale(1.1263,1.0);">AV</span>
<svg class="r" style="left:243px;top:82.6px;" width="13.2" height="4" viewBox="0 0 13.2 4"><path d="M0.6 2 H12.6 M2.4 0.4 L0.6 2 L2.4 3.6 M10.8 0.4 L12.6 2 L10.8 3.6" fill="none" stroke="#A3A3A3" stroke-width="0.8"/></svg>
<svg class="r" style="left:258.85px;top:78.85px;" width="5.3" height="3.9" viewBox="0 0 5.3 3.9"><path d="M1 1 L2.65 2.90 L4.30 1" fill="none" stroke="#ADADAD" stroke-width="1.1" stroke-linecap="round" stroke-linejoin="round"/></svg>
<svg class="r" style="left:157.6px;top:93px;" width="13" height="13" viewBox="0 0 13 13"><path d="M3.6 7.8 L8.6 1.4 L11.2 3.2 L6.4 9.6 Z M3.6 7.8 L2.6 9.8 L4.8 10.4 L6.4 9.6" fill="none" stroke="#999" stroke-width="1.15" stroke-linejoin="round"/><rect x="0" y="10" width="12.4" height="2.9" fill="#A9A6A2"/></svg>
<svg class="r" style="left:174.54999999999998px;top:98.05px;" width="5.3" height="3.9" viewBox="0 0 5.3 3.9"><path d="M1 1 L2.65 2.90 L4.30 1" fill="none" stroke="#ADADAD" stroke-width="1.1" stroke-linecap="round" stroke-linejoin="round"/></svg>
<span class="t" style="left:189.00px;top:91.20px;font-size:11.6px;line-height:13.33px;color:#9A9A9A;transform:scale(0.9796,1.0);">A</span>
<div class="r" style="left:186.3px;top:103px;width:12.5px;height:2.9px;background:#A9A6A2;"></div>
<svg class="r" style="left:203.35px;top:98.05px;" width="5.3" height="3.9" viewBox="0 0 5.3 3.9"><path d="M1 1 L2.65 2.90 L4.30 1" fill="none" stroke="#ADADAD" stroke-width="1.1" stroke-linecap="round" stroke-linejoin="round"/></svg>
<span class="t" style="left:215.40px;top:93.98px;font-size:10.8px;line-height:12.41px;color:#A3A3A3;transform:scale(0.9636,0.9);">Aa</span>
<svg class="r" style="left:230.95px;top:98.05px;" width="5.3" height="3.9" viewBox="0 0 5.3 3.9"><path d="M1 1 L2.65 2.90 L4.30 1" fill="none" stroke="#ADADAD" stroke-width="1.1" stroke-linecap="round" stroke-linejoin="round"/></svg>
<div class="r" style="left:243.8px;top:92.2px;width:1px;height:15.0px;background:#D4D2D0;"></div>
<span class="t" style="left:250.40px;top:91.93px;font-size:15px;line-height:17.23px;color:#A3A3A3;transform:scale(0.9495,1.0);">A</span>
<svg class="r" style="left:258.4px;top:94.2px;" width="5" height="3.4" viewBox="0 0 5 3.4"><path d="M0.6 2.7 L2.3 0.8 L4.0 2.7" fill="none" stroke="#A3A3A3" stroke-width="0.9"/></svg>
<span class="t" style="left:268.20px;top:94.82px;font-size:11.8px;line-height:13.56px;color:#A3A3A3;transform:scale(1.0272,1.0);">A</span>
<svg class="r" style="left:275.7px;top:94.4px;" width="5" height="3.4" viewBox="0 0 5 3.4"><path d="M0.6 0.6 L2.3 2.5 L4.0 0.6" fill="none" stroke="#A3A3A3" stroke-width="0.9"/></svg>
<div class="r" style="left:284.9px;top:92.2px;width:1px;height:15.0px;background:#D4D2D0;"></div>
<span class="t" style="left:292.00px;top:91.83px;font-size:13px;line-height:14.94px;color:#A3A3A3;transform:scale(0.9091,1.0);">A</span>
<svg class="r" style="left:296.4px;top:99.3px;" width="8.4" height="6.6" viewBox="0 0 8.4 6.6"><path d="M3.6 0.6 L7.6 2.4 L5 6 L1 4.2 Z M2.2 2.4 L6.2 4.2" fill="#F3F2F1" stroke="#A3A3A3" stroke-width="0.85" stroke-linejoin="round"/></svg>
<span class="t" style="left:213.73px;top:113.81px;font-size:10.0px;line-height:11.49px;color:#333333;transform:scale(0.9686,0.86);">Font</span>
<svg class="r" style="left:303.2px;top:116.5px;" width="7" height="7" viewBox="0 0 7 7"><path d="M0.5 4.6 V0.5 H4.6" fill="none" stroke="#B0B0B0" stroke-width="0.9"/><path d="M2.4 2.4 L5.6 5.6" fill="none" stroke="#B0B0B0" stroke-width="0.95"/><path d="M6.4 3 V6.4 H3 Z" fill="#B0B0B0"/></svg>
<div class="r" style="left:321px;top:56.300000000000004px;width:1.8px;height:1.8px;background:#A3A3A3;"></div>
<div class="r" style="left:324.7px;top:56.7px;width:8.2px;height:1.0px;background:#ADADAD;"></div>
<div class="r" style="left:321px;top:61.0px;width:1.8px;height:1.8px;background:#A3A3A3;"></div>
<div class="r" style="left:324.7px;top:61.4px;width:8.2px;height:1.0px;background:#ADADAD;"></div>
<div class="r" style="left:321px;top:65.8px;width:1.8px;height:1.8px;background:#A3A3A3;"></div>
<div class="r" style="left:324.7px;top:66.2px;width:8.2px;height:1.0px;background:#ADADAD;"></div>
<svg class="r" style="left:338.35px;top:60.65px;" width="5.3" height="3.9" viewBox="0 0 5.3 3.9"><path d="M1 1 L2.65 2.90 L4.30 1" fill="none" stroke="#ADADAD" stroke-width="1.1" stroke-linecap="round" stroke-linejoin="round"/></svg>
<span class="t" style="left:349.28px;top:55.08px;font-size:4px;line-height:4.60px;color:#A3A3A3;">1</span>
<div class="r" style="left:354.4px;top:56.7px;width:7.6px;height:1.0px;background:#ADADAD;"></div>
<span class="t" style="left:349.40px;top:59.78px;font-size:4px;line-height:4.60px;color:#A3A3A3;">2</span>
<div class="r" style="left:354.4px;top:61.4px;width:7.6px;height:1.0px;background:#ADADAD;"></div>
<span class="t" style="left:349.44px;top:64.58px;font-size:4px;line-height:4.60px;color:#A3A3A3;">3</span>
<div class="r" style="left:354.4px;top:66.2px;width:7.6px;height:1.0px;background:#ADADAD;"></div>
<svg class="r" style="left:367.15000000000003px;top:60.65px;" width="5.3" height="3.9" viewBox="0 0 5.3 3.9"><path d="M1 1 L2.65 2.90 L4.30 1" fill="none" stroke="#ADADAD" stroke-width="1.1" stroke-linecap="round" stroke-linejoin="round"/></svg>
<div class="r" style="left:379.6px;top:55px;width:1px;height:15px;background:#D4D2D0;"></div>
<svg class="r" style="left:385.6px;top:56.4px;" width="5" height="11.6" viewBox="0 0 5 11.6"><path d="M2.4 0.8 V4.6 M2.4 7 V10.8 M0.6 2.6 L2.4 0.7 L4.2 2.6 M0.6 9 L2.4 10.9 L4.2 9" fill="none" stroke="#A3A3A3" stroke-width="0.9"/></svg>
<div class="r" style="left:391px;top:56.7px;width:7.6px;height:1.0px;background:#ADADAD;"></div>
<div class="r" style="left:391px;top:59.9px;width:7.6px;height:1.0px;background:#ADADAD;"></div>
<div class="r" style="left:391px;top:63.1px;width:7.6px;height:1.0px;background:#ADADAD;"></div>
<div class="r" style="left:391px;top:66.2px;width:7.6px;height:1.0px;background:#ADADAD;"></div>
<svg class="r" style="left:401.65000000000003px;top:60.65px;" width="5.3" height="3.9" viewBox="0 0 5.3 3.9"><path d="M1 1 L2.65 2.90 L4.30 1" fill="none" stroke="#ADADAD" stroke-width="1.1" stroke-linecap="round" stroke-linejoin="round"/></svg>
<svg class="r" style="left:433.2px;top:55.8px;" width="12" height="13.2" viewBox="0 0 12 13.2"><path d="M2.6 0.4 V12.2 M0.6 10 L2.6 12.3 L4.6 10" fill="none" stroke="#A3A3A3" stroke-width="0.9"/><path d="M8.6 7.4 V12.2 M7 10.4 L8.6 12.3 L10.2 10.4" fill="none" stroke="#A3A3A3" stroke-width="0.85"/></svg>
<span class="t" style="left:438.50px;top:54.88px;font-size:8.2px;line-height:9.42px;color:#A3A3A3;transform:scale(1.0532,1.0);">A</span>
<svg class="r" style="left:447.45000000000005px;top:60.65px;" width="5.3" height="3.9" viewBox="0 0 5.3 3.9"><path d="M1 1 L2.65 2.90 L4.30 1" fill="none" stroke="#ADADAD" stroke-width="1.1" stroke-linecap="round" stroke-linejoin="round"/></svg>
<div class="r" style="left:321.9px;top:75.3px;width:11.0px;height:1.0px;background:#ADADAD;"></div>
<div class="r" style="left:321.9px;top:85.0px;width:11.0px;height:1.0px;background:#ADADAD;"></div>
<div class="r" style="left:327.9px;top:78.5px;width:5.0px;height:1.0px;background:#ADADAD;"></div>
<div class="r" style="left:327.9px;top:81.7px;width:5.0px;height:1.0px;background:#ADADAD;"></div>
<svg class="r" style="left:321.9px;top:78.6px;" width="5.4" height="4.4" viewBox="0 0 5.4 4.4"><path d="M0.5 2.2 H5.2 M2.2 0.5 L0.5 2.2 L2.2 3.9" fill="none" stroke="#A3A3A3" stroke-width="0.85"/></svg>
<div class="r" style="left:339px;top:75.3px;width:11px;height:1.0px;background:#ADADAD;"></div>
<div class="r" style="left:339px;top:85.0px;width:11px;height:1.0px;background:#ADADAD;"></div>
<div class="r" style="left:345px;top:78.5px;width:5px;height:1.0px;background:#ADADAD;"></div>
<div class="r" style="left:345px;top:81.7px;width:5px;height:1.0px;background:#ADADAD;"></div>
<svg class="r" style="left:339px;top:78.6px;" width="5.4" height="4.4" viewBox="0 0 5.4 4.4"><path d="M0.2 2.2 H4.9 M3.2 0.5 L4.9 2.2 L3.2 3.9" fill="none" stroke="#A3A3A3" stroke-width="0.85"/></svg>
<div class="r" style="left:356.0px;top:73.6px;width:1px;height:15.0px;background:#D4D2D0;"></div>
<svg class="r" style="left:364px;top:77.6px;" width="3.4" height="6.8" viewBox="0 0 3.4 6.8"><path d="M0.5 0.6 L2.8 3.4 L0.5 6.2" fill="none" stroke="#A3A3A3" stroke-width="0.85"/></svg>
<span class="t" style="left:367.51px;top:77.32px;font-size:7.6px;line-height:8.73px;color:#A3A3A3;transform:scale(1.6018,1.0);">¶</span>
<span class="t" style="left:380.31px;top:77.32px;font-size:7.6px;line-height:8.73px;color:#A3A3A3;transform:scale(1.6018,1.0);">¶</span>
<svg class="r" style="left:387.4px;top:77.6px;" width="3.4" height="6.8" viewBox="0 0 3.4 6.8"><path d="M2.9 0.6 L0.6 3.4 L2.9 6.2" fill="none" stroke="#A3A3A3" stroke-width="0.85"/></svg>
<div class="r" style="left:397.7px;top:73.6px;width:1px;height:15.0px;background:#D4D2D0;"></div>
<div class="r" style="left:405px;top:77.7px;width:4.3px;height:1.0px;background:#BDBDBD;"></div>
<div class="r" style="left:410.7px;top:77.7px;width:4.3px;height:1.0px;background:#BDBDBD;"></div>
<div class="r" style="left:405px;top:80.4px;width:4.3px;height:1.0px;background:#BDBDBD;"></div>
<div class="r" style="left:410.7px;top:80.4px;width:4.3px;height:1.0px;background:#BDBDBD;"></div>
<div class="r" style="left:405px;top:83.1px;width:4.3px;height:1.0px;background:#BDBDBD;"></div>
<div class="r" style="left:410.7px;top:83.1px;width:4.3px;height:1.0px;background:#BDBDBD;"></div>
<svg class="r" style="left:419.55px;top:78.85px;" width="5.3" height="3.9" viewBox="0 0 5.3 3.9"><path d="M1 1 L2.65 2.90 L4.30 1" fill="none" stroke="#ADADAD" stroke-width="1.1" stroke-linecap="round" stroke-linejoin="round"/></svg>
<svg class="r" style="left:431.6px;top:74.4px;" width="13.6" height="12.6" viewBox="0 0 13.6 12.6"><path d="M3.4 2.6 H0.6 V10 H3.4 M10.2 2.6 H13 V10 H10.2" fill="none" stroke="#A3A3A3" stroke-width="0.95"/><path d="M4 6.4 H9.6 M6.8 0.5 V4.6 M5.4 1.9 L6.8 0.5 L8.2 1.9 M6.8 8.2 V12.2 M5.4 10.8 L6.8 12.2 L8.2 10.8" fill="none" stroke="#A3A3A3" stroke-width="0.8"/></svg>
<svg class="r" style="left:447.45000000000005px;top:78.85px;" width="5.3" height="3.9" viewBox="0 0 5.3 3.9"><path d="M1 1 L2.65 2.90 L4.30 1" fill="none" stroke="#ADADAD" stroke-width="1.1" stroke-linecap="round" stroke-linejoin="round"/></svg>
<div class="r" style="left:321.9px;top:94.1px;width:11.0px;height:1.0px;background:#ADADAD;"></div>
<div class="r" style="left:339px;top:94.1px;width:11px;height:1.0px;background:#ADADAD;"></div>
<div class="r" style="left:356.2px;top:94.1px;width:11.0px;height:1.0px;background:#ADADAD;"></div>
<div class="r" style="left:373.4px;top:94.1px;width:11.1px;height:1.0px;background:#ADADAD;"></div>
<div class="r" style="left:321.9px;top:97.3px;width:7.8px;height:1.0px;background:#ADADAD;"></div>
<div class="r" style="left:341.2px;top:97.3px;width:6.6px;height:1.0px;background:#ADADAD;"></div>
<div class="r" style="left:359.4px;top:97.3px;width:7.8px;height:1.0px;background:#ADADAD;"></div>
<div class="r" style="left:373.4px;top:97.3px;width:11.1px;height:1.0px;background:#ADADAD;"></div>
<div class="r" style="left:321.9px;top:100.6px;width:11.0px;height:1.0px;background:#ADADAD;"></div>
<div class="r" style="left:339px;top:100.6px;width:11px;height:1.0px;background:#ADADAD;"></div>
<div class="r" style="left:356.2px;top:100.6px;width:11.0px;height:1.0px;background:#ADADAD;"></div>
<div class="r" style="left:373.4px;top:100.6px;width:11.1px;height:1.0px;background:#ADADAD;"></div>
<div class="r" style="left:321.9px;top:103.8px;width:7.8px;height:1.0px;background:#ADADAD;"></div>
<div class="r" style="left:341.2px;top:103.8px;width:6.6px;height:1.0px;background:#ADADAD;"></div>
<div class="r" style="left:359.4px;top:103.8px;width:7.8px;height:1.0px;background:#ADADAD;"></div>
<div class="r" style="left:373.4px;top:103.8px;width:11.1px;height:1.0px;background:#ADADAD;"></div>
<svg class="r" style="left:388.35px;top:98.05px;" width="5.3" height="3.9" viewBox="0 0 5.3 3.9"><path d="M1 1 L2.65 2.90 L4.30 1" fill="none" stroke="#ADADAD" stroke-width="1.1" stroke-linecap="round" stroke-linejoin="round"/></svg>
<svg class="r" style="left:432px;top:94.8px;" width="13" height="10" viewBox="0 0 13 10"><path d="M0.4 0.6 H9 L11 2.8 H5.4 L3.2 5 L0.4 0.6 Z" fill="#A3A3A3"/><rect x="4.4" y="4.2" width="8" height="5.2" fill="#F3F2F1" stroke="#A3A3A3" stroke-width="0.9"/><rect x="5.8" y="6.2" width="2.2" height="1.8" fill="#A3A3A3"/><rect x="8.8" y="6.2" width="2.2" height="1.8" fill="#A3A3A3"/></svg>
<svg class="r" style="left:447.45000000000005px;top:98.05px;" width="5.3" height="3.9" viewBox="0 0 5.3 3.9"><path d="M1 1 L2.65 2.90 L4.30 1" fill="none" stroke="#ADADAD" stroke-width="1.1" stroke-linecap="round" stroke-linejoin="round"/></svg>
<span class="t" style="left:360.27px;top:113.81px;font-size:10.0px;line-height:11.49px;color:#333333;transform:scale(0.9071,0.86);">Paragraph</span>
<svg class="r" style="left:454.2px;top:116.5px;" width="7" height="7" viewBox="0 0 7 7"><path d="M0.5 4.6 V0.5 H4.6" fill="none" stroke="#B0B0B0" stroke-width="0.9"/><path d="M2.4 2.4 L5.6 5.6" fill="none" stroke="#B0B0B0" stroke-width="0.95"/><path d="M6.4 3 V6.4 H3 Z" fill="#B0B0B0"/></svg>
<div class="r" style="left:475.6px;top:56.9px;width:15px;height:14.8px;background:#7FB6EC;box-sizing:border-box;border:1px solid #2B7CD3;"></div>
<div class="r" style="left:482.2px;top:63.8px;width:14.8px;height:14.8px;background:#FFFFFF;box-sizing:border-box;border:1.2px solid #444;border-radius:50%;"></div>
<span class="t" style="left:471.27px;top:83.51px;font-size:10.0px;line-height:11.49px;color:#333333;transform:scale(0.8545,0.86);">Shapes</span>
<svg class="r" style="left:483.35px;top:98.85px;" width="5.3" height="3.9" viewBox="0 0 5.3 3.9"><path d="M1 1 L2.65 2.90 L4.30 1" fill="none" stroke="#333333" stroke-width="1.1" stroke-linecap="round" stroke-linejoin="round"/></svg>
<div class="r" style="left:513.5px;top:60.3px;width:15.5px;height:15.2px;background:#FBD794;box-sizing:border-box;border:1px solid #E8912D;"></div>
<div class="r" style="left:510.4px;top:57.2px;width:8.8px;height:8.3px;background:#FFFFFF;box-sizing:border-box;border:1.1px solid #444;"></div>
<div class="r" style="left:522.4px;top:69.3px;width:9.4px;height:9px;background:#FFFFFF;box-sizing:border-box;border:1.1px solid #444;"></div>
<span class="t" style="left:504.60px;top:83.51px;font-size:10.0px;line-height:11.49px;color:#333333;transform:scale(0.9145,0.86);">Arrange</span>
<svg class="r" style="left:517.35px;top:98.85px;" width="5.3" height="3.9" viewBox="0 0 5.3 3.9"><path d="M1 1 L2.65 2.90 L4.30 1" fill="none" stroke="#333333" stroke-width="1.1" stroke-linecap="round" stroke-linejoin="round"/></svg>
<div class="r" style="left:546.6px;top:57.2px;width:22.2px;height:21.4px;background:#E9EBEF;box-sizing:border-box;border:1px solid #BDBDBD;"></div>
<svg class="r" style="left:552px;top:63.6px;" width="19" height="16.4" viewBox="0 0 19 16.4"><path d="M17.6 1 C14.6 4 11.4 8 8.8 11.2 L6.8 9.8 C9.6 6.6 13.6 3 17.6 1 Z" fill="#E6E6E6" stroke="#A3A3A3" stroke-width="0.8"/><path d="M6.6 10 C4.4 10 3.6 12 1.4 14.8 C4.6 15.6 7.8 14.4 8.6 11.4 Z" fill="#BEBEBE" stroke="#A3A3A3" stroke-width="0.6"/></svg>
<span class="t" style="left:544.72px;top:83.51px;font-size:10.0px;line-height:11.49px;color:#ABABAB;transform:scale(0.9562,0.86);">Quick</span>
<span class="t" style="left:540.66px;top:96.41px;font-size:10.0px;line-height:11.49px;color:#ABABAB;transform:scale(0.8897,0.86);">Styles</span>
<svg class="r" style="left:567.0999999999999px;top:99.05px;" width="5.4" height="3.9" viewBox="0 0 5.4 3.9"><path d="M1 1 L2.70 2.90 L4.40 1" fill="none" stroke="#ABABAB" stroke-width="1.1" stroke-linecap="round" stroke-linejoin="round"/></svg>
<svg class="r" style="left:578px;top:55px;" width="12.4" height="13" viewBox="0 0 12.4 13"><path d="M5.6 1 L10 5.4 L5.6 9.4 L1.4 5.2 Z M5.6 1 V3.6" fill="none" stroke="#A3A3A3" stroke-width="0.95" stroke-linejoin="round"/><path d="M10.6 6.2 C11.4 7.4 11.8 8 11.2 8.8 C10.6 9.2 10 8.6 10.2 7.8 Z" fill="#A3A3A3"/><rect x="0" y="9.6" width="11.8" height="3" fill="#B1AEAA"/></svg>
<svg class="r" style="left:595.15px;top:59.75px;" width="5.3" height="3.9" viewBox="0 0 5.3 3.9"><path d="M1 1 L2.65 2.90 L4.30 1" fill="none" stroke="#ADADAD" stroke-width="1.1" stroke-linecap="round" stroke-linejoin="round"/></svg>
<svg class="r" style="left:578px;top:72.4px;" width="12.4" height="13.4" viewBox="0 0 12.4 13.4"><path d="M7 1.6 H1 V8.6 H4" fill="none" stroke="#A3A3A3" stroke-width="0.95"/><path d="M4.4 8.6 L5 6.4 L10 0.8 L11.6 2.2 L6.6 7.8 Z" fill="none" stroke="#A3A3A3" stroke-width="0.9" stroke-linejoin="round"/><rect x="0" y="10.3" width="11.8" height="3" fill="#B1AEAA"/></svg>
<svg class="r" style="left:595.15px;top:77.35px;" width="5.3" height="3.9" viewBox="0 0 5.3 3.9"><path d="M1 1 L2.65 2.90 L4.30 1" fill="none" stroke="#ADADAD" stroke-width="1.1" stroke-linecap="round" stroke-linejoin="round"/></svg>
<svg class="r" style="left:577.6px;top:92.6px;" width="13" height="10" viewBox="0 0 13 10"><path d="M3.6 0.6 H12.2 L9.2 5 H0.7 Z" fill="#F6F6F6" stroke="#A3A3A3" stroke-width="0.9" stroke-linejoin="round"/><path d="M0.7 5 H9.2 L12.2 0.8 V4 L9.4 8.8 H1.6 L0.7 7.6 Z" fill="#A2A2A2" stroke="#A3A3A3" stroke-width="0.7" stroke-linejoin="round"/></svg>
<svg class="r" style="left:593.35px;top:95.25px;" width="5.3" height="3.9" viewBox="0 0 5.3 3.9"><path d="M1 1 L2.65 2.90 L4.30 1" fill="none" stroke="#ADADAD" stroke-width="1.1" stroke-linecap="round" stroke-linejoin="round"/></svg>
<span class="t" style="left:513.64px;top:113.81px;font-size:10.0px;line-height:11.49px;color:#333333;transform:scale(0.9460,0.86);">Drawing</span>
<svg class="r" style="left:601.6px;top:116.5px;" width="7" height="7" viewBox="0 0 7 7"><path d="M0.5 4.6 V0.5 H4.6" fill="none" stroke="#B0B0B0" stroke-width="0.9"/><path d="M2.4 2.4 L5.6 5.6" fill="none" stroke="#B0B0B0" stroke-width="0.95"/><path d="M6.4 3 V6.4 H3 Z" fill="#B0B0B0"/></svg>
<div class="r" style="left:620px;top:54.3px;width:24.8px;height:23.6px;background:#FFFFFF;box-sizing:border-box;border:1px solid #DAD8D6;"></div>
<svg class="r" style="left:626px;top:59px;" width="14" height="14" viewBox="0 0 14 14"><circle cx="9" cy="4.6" r="3.5" fill="none" stroke="#444" stroke-width="1.1"/><path d="M6.5 7.2 L1.2 12" stroke="#444" stroke-width="1.2" fill="none"/></svg>
<span class="t" style="left:617.13px;top:81.71px;font-size:10.0px;line-height:11.49px;color:#333333;transform:scale(0.9588,0.86);">Editing</span>
<svg class="r" style="left:629.0500000000001px;top:97.64999999999999px;" width="5.3" height="3.9" viewBox="0 0 5.3 3.9"><path d="M1 1 L2.65 2.90 L4.30 1" fill="none" stroke="#333333" stroke-width="1.1" stroke-linecap="round" stroke-linejoin="round"/></svg>
<svg class="r" style="left:667px;top:56px;" width="17" height="23.4" viewBox="0 0 17 23.4"><rect x="3.9" y="1.2" width="9.8" height="16.2" rx="2" fill="#7FB6EC" stroke="#2B7CD3" stroke-width="1"/><path d="M1.4 11.8 V15.4 C1.4 18.4 4 19.8 8.8 19.8 C13.6 19.8 16 18.4 16 15.4 V11.8" fill="none" stroke="#444" stroke-width="1.05"/><path d="M8.8 19.8 V22.4 M5.4 22.4 H12" stroke="#444" stroke-width="1.05" fill="none"/></svg>
<span class="t" style="left:661.05px;top:83.51px;font-size:10.0px;line-height:11.49px;color:#333333;transform:scale(0.9331,0.86);">Dictate</span>
<svg class="r" style="left:672.85px;top:98.85px;" width="5.3" height="3.9" viewBox="0 0 5.3 3.9"><path d="M1 1 L2.65 2.90 L4.30 1" fill="none" stroke="#333333" stroke-width="1.1" stroke-linecap="round" stroke-linejoin="round"/></svg>
<span class="t" style="left:665.42px;top:113.81px;font-size:10.0px;line-height:11.49px;color:#333333;transform:scale(0.8494,0.86);">Voice</span>
<svg class="r" style="left:752.5px;top:118.2px;" width="8" height="5" viewBox="0 0 8 5"><path d="M0.7 4.3 L4 0.9 L7.3 4.3" fill="none" stroke="#444" stroke-width="1.1"/></svg>
<div class="r" style="left:755px;top:128px;width:11.2px;height:329px;background:#DFDFDF;"></div>
<div class="r" style="left:755px;top:128px;width:11.2px;height:11.5px;background:#FFFFFF;box-sizing:border-box;border:1px solid #C6C6C6;"></div>
<div class="r" style="left:755px;top:139.5px;width:11.2px;height:30.2px;background:#FFFFFF;box-sizing:border-box;border:1px solid #C6C6C6;border-top:none;"></div>
<div class="r" style="left:755px;top:445.5px;width:11.2px;height:11px;background:#FFFFFF;box-sizing:border-box;border:1px solid #DADADA;"></div>
<svg class="r" style="left:755px;top:128px;" width="11.2" height="11.5" viewBox="0 0 11.2 11.5"><path d="M2.8 7.4 L5.6 4.4 L8.4 7.4 Z" fill="#666"/></svg>
<svg class="r" style="left:755px;top:445.5px;" width="11.2" height="11" viewBox="0 0 11.2 11"><path d="M3 4.2 L8.2 4.2 L5.6 7.2 Z" fill="#555"/></svg>
<svg class="r" style="left:757.4px;top:460.2px;" width="6.6" height="7" viewBox="0 0 6.6 7"><path d="M0.4 3.2 L3.3 0.3 L6.2 3.2 Z M0.4 6.8 L3.3 3.9 L6.2 6.8 Z" fill="#555"/><rect x="0.4" y="3.1" width="5.8" height="0.8" fill="#555"/></svg>
<svg class="r" style="left:757.4px;top:474.4px;" width="6.6" height="7" viewBox="0 0 6.6 7"><path d="M0.4 0.3 L3.3 3.2 L6.2 0.3 Z M0.4 3.9 L3.3 6.8 L6.2 3.9 Z" fill="#555"/><rect x="0.4" y="3.2" width="5.8" height="0.8" fill="#555"/></svg>
<span class="t" style="left:6.56px;top:529.61px;font-size:10.0px;line-height:11.49px;color:#444444;transform:scale(0.8867,0.86);">Slide 1 of 10</span>
<span class="t" style="left:80.99px;top:529.61px;font-size:10.0px;line-height:11.49px;color:#444444;transform:scale(0.8889,0.86);">English (United States)</span>
<svg class="r" style="left:428px;top:531px;" width="12" height="10" viewBox="0 0 12 10"><path d="M0.3 4.5 H11.7 M0.3 6.5 H11.7 M0.3 8.5 H8" stroke="#555" stroke-width="0.9" fill="none"/><path d="M4.2 2.6 L6 0.8 L7.8 2.6" stroke="#555" stroke-width="0.9" fill="none"/></svg>
<span class="t" style="left:440.98px;top:529.91px;font-size:10.0px;line-height:11.49px;color:#444444;transform:scale(0.9036,0.86);">Notes</span>
<div class="r" style="left:480.2px;top:527.5px;width:30.3px;height:16.5px;background:#C8C6C4;"></div>
<svg class="r" style="left:489.4px;top:530.7px;" width="12" height="10" viewBox="0 0 12 10"><rect x="0.5" y="0.5" width="10.6" height="8.8" fill="none" stroke="#444" stroke-width="1"/><path d="M2.5 0.5 V9.3 M2.5 7.2 H11" stroke="#444" stroke-width="0.9" fill="none"/><rect x="4.8" y="2.3" width="4" height="2.4" fill="none" stroke="#444" stroke-width="0.9"/></svg>
<svg class="r" style="left:521px;top:531.0px;" width="11" height="10" viewBox="0 0 11 10"><rect x="0.5" y="0.5" width="3.8" height="3.4" fill="none" stroke="#555" stroke-width="0.9"/><rect x="6.4" y="0.5" width="3.8" height="3.4" fill="none" stroke="#555" stroke-width="0.9"/><rect x="0.5" y="5.9" width="3.8" height="3.4" fill="none" stroke="#555" stroke-width="0.9"/><rect x="6.4" y="5.9" width="3.8" height="3.4" fill="none" stroke="#555" stroke-width="0.9"/></svg>
<svg class="r" style="left:552px;top:530.4px;" width="11" height="10" viewBox="0 0 11 10"><path d="M0.5 0.6 H4.4 L5.2 1.4 L6 0.6 H9.9 V9.2 H6 L5.2 9.8 L4.4 9.2 H0.5 Z M5.2 1.4 V9.8" fill="none" stroke="#555" stroke-width="0.9"/><path d="M1.8 2.8 H3.8 M1.8 4.6 H3.8 M1.8 6.4 H3.8 M6.6 2.8 H8.6 M6.6 4.6 H8.6 M6.6 6.4 H8.6" stroke="#555" stroke-width="0.7" fill="none"/></svg>
<svg class="r" style="left:583.2px;top:530.2px;" width="11" height="10.6" viewBox="0 0 11 10.6"><path d="M0.3 0.7 H10.5 M1.4 0.7 V6.2 H9.4 V0.7 M5.4 6.2 V9.8 M3 9.9 H7.8" fill="none" stroke="#555" stroke-width="0.95"/><path d="M3.6 2.6 H7.2" stroke="#888" stroke-width="0.7" fill="none"/></svg>
<div class="r" style="left:609px;top:534.6px;width:5.8px;height:1px;background:#555;"></div>
<div class="r" style="left:619px;top:534.6px;width:78px;height:1px;background:#C6C6C6;"></div>
<div class="r" style="left:658px;top:532.4px;width:1px;height:5.2px;background:#B0B0B0;"></div>
<div class="r" style="left:639.2px;top:530.8px;width:4px;height:9px;background:#777777;"></div>
<div class="r" style="left:700.8px;top:534.6px;width:5.8px;height:1px;background:#555;"></div>
<div class="r" style="left:703.2px;top:532.2px;width:1px;height:5.8px;background:#555;"></div>
<span class="t" style="left:716.47px;top:529.71px;font-size:10.0px;line-height:11.49px;color:#444444;transform:scale(0.8229,0.86);">58%</span>
<svg class="r" style="left:743px;top:529.6px;" width="12.4" height="11.4" viewBox="0 0 12.4 11.4"><rect x="3.6" y="3" width="5.2" height="5.4" fill="none" stroke="#444" stroke-width="0.95"/><path d="M4.8 1.6 L6.2 0.4 L7.6 1.6 M4.8 9.8 L6.2 11 L7.6 9.8 M1.7 4.4 L0.4 5.7 L1.7 7 M10.7 4.4 L12 5.7 L10.7 7" fill="none" stroke="#444" stroke-width="0.9"/></svg>
<div class="r" style="left:0px;top:26.6px;width:1.1px;height:518.4px;background:#C4563A;"></div>
<div class="r" style="left:766.7px;top:26.6px;width:1.3px;height:518.4px;background:#C4563A;"></div>
<div class="r" style="left:0px;top:543.6px;width:768px;height:1.4px;background:#C4563A;"></div>
</body></html>
